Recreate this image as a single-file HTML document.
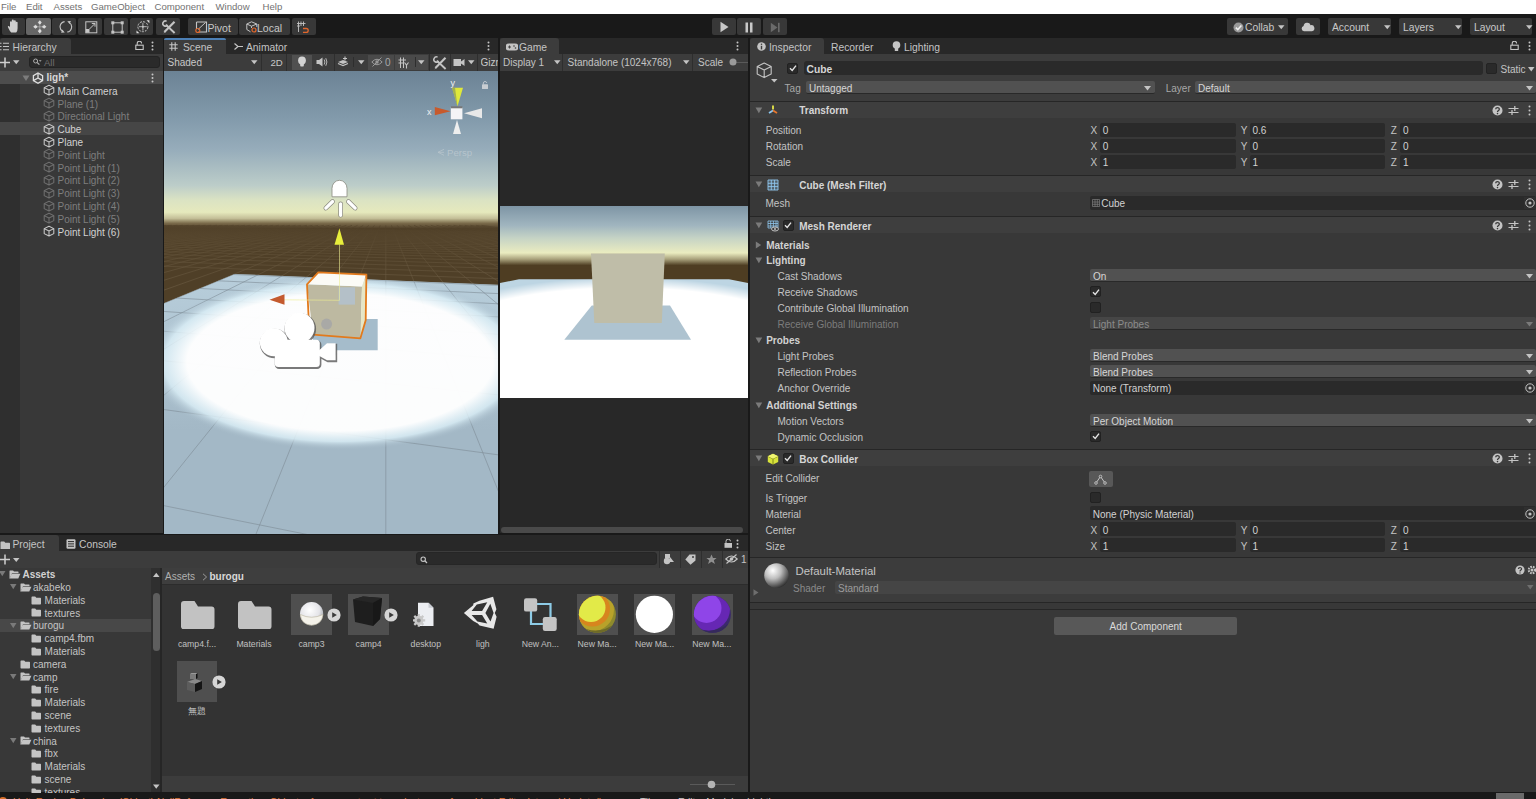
<!DOCTYPE html><html><head><meta charset="utf-8"><style>
*{margin:0;padding:0;box-sizing:border-box}
html,body{width:1536px;height:799px;overflow:hidden}
body{background:#191919;font-family:"Liberation Sans",sans-serif;font-size:10px;color:#c4c4c4;position:relative}
.a{position:absolute}
.t{white-space:nowrap}
svg{position:absolute;overflow:hidden}
</style></head><body>
<div class="a" style="left:0px;top:0px;width:1536px;height:14px;background:#ffffff;"></div>
<div class="a t" style="left:1px;top:1.0px;line-height:12px;font-size:9.6px;color:#727272;">File</div>
<div class="a t" style="left:26px;top:1.0px;line-height:12px;font-size:9.6px;color:#727272;">Edit</div>
<div class="a t" style="left:53.5px;top:1.0px;line-height:12px;font-size:9.6px;color:#727272;">Assets</div>
<div class="a t" style="left:91px;top:1.0px;line-height:12px;font-size:9.6px;color:#727272;">GameObject</div>
<div class="a t" style="left:154.5px;top:1.0px;line-height:12px;font-size:9.6px;color:#727272;">Component</div>
<div class="a t" style="left:215.5px;top:1.0px;line-height:12px;font-size:9.6px;color:#727272;">Window</div>
<div class="a t" style="left:262.5px;top:1.0px;line-height:12px;font-size:9.6px;color:#727272;">Help</div>
<div class="a" style="left:0px;top:14px;width:1536px;height:24px;background:#191919;"></div>
<div class="a" style="left:2px;top:18px;width:23px;height:17px;background:#383838;border-radius:2px;"></div>
<div class="a" style="left:26px;top:18px;width:25px;height:17px;background:#666666;border-radius:2px;"></div>
<div class="a" style="left:52px;top:18px;width:24px;height:17px;background:#383838;border-radius:2px;"></div>
<div class="a" style="left:78px;top:18px;width:24px;height:17px;background:#383838;border-radius:2px;"></div>
<div class="a" style="left:104px;top:18px;width:24px;height:17px;background:#383838;border-radius:2px;"></div>
<div class="a" style="left:130px;top:18px;width:23px;height:17px;background:#383838;border-radius:2px;"></div>
<div class="a" style="left:156px;top:18px;width:24px;height:17px;background:#383838;border-radius:2px;"></div>
<div class="a" style="left:188px;top:18px;width:49.5px;height:17px;background:#383838;border-radius:2px;"></div>
<div class="a" style="left:239px;top:18px;width:50.5px;height:17px;background:#383838;border-radius:2px;"></div>
<div class="a" style="left:291.5px;top:18px;width:24.0px;height:17px;background:#383838;border-radius:2px;"></div>
<div class="a t" style="left:207.5px;top:21.5px;line-height:12px;font-size:10.5px;color:#c8c8c8;">Pivot</div>
<div class="a t" style="left:257px;top:21.5px;line-height:12px;font-size:10.5px;color:#c8c8c8;">Local</div>
<div class="a" style="left:711.5px;top:18px;width:24.0px;height:17px;background:#383838;border-radius:2px;"></div>
<div class="a" style="left:736.5px;top:18px;width:24.5px;height:17px;background:#383838;border-radius:2px;"></div>
<div class="a" style="left:762.5px;top:18px;width:24.5px;height:17px;background:#383838;border-radius:2px;"></div>
<div class="a" style="left:1227px;top:18px;width:61px;height:17px;background:#383838;border-radius:2px;"></div>
<div class="a" style="left:1296px;top:18px;width:24px;height:17px;background:#383838;border-radius:2px;"></div>
<div class="a" style="left:1328px;top:18px;width:63px;height:17px;background:#383838;border-radius:2px;"></div>
<div class="a" style="left:1399px;top:18px;width:62.5px;height:17px;background:#383838;border-radius:2px;"></div>
<div class="a" style="left:1469.5px;top:18px;width:62.5px;height:17px;background:#383838;border-radius:2px;"></div>
<div class="a t" style="left:1245px;top:21.5px;line-height:12px;font-size:10.3px;color:#c8c8c8;">Collab</div>
<div class="a t" style="left:1332px;top:21.5px;line-height:12px;font-size:10.3px;color:#c8c8c8;">Account</div>
<div class="a t" style="left:1403px;top:21.5px;line-height:12px;font-size:10.3px;color:#c8c8c8;">Layers</div>
<div class="a t" style="left:1474px;top:21.5px;line-height:12px;font-size:10.3px;color:#c8c8c8;">Layout</div>
<div class="a" style="left:0px;top:38px;width:1536px;height:16px;background:#282828;"></div>
<div class="a" style="left:0px;top:38px;width:71px;height:16px;background:#3c3c3c;border-radius:3px 3px 0 0;"></div>
<div class="a t" style="left:12.5px;top:41.5px;line-height:12px;font-size:10.3px;color:#c4c4c4;">Hierarchy</div>
<div class="a" style="left:0px;top:54px;width:162.5px;height:16.5px;background:#3c3c3c;"></div>
<div class="a" style="left:29px;top:56px;width:131px;height:11.5px;background:#2a2a2a;border-radius:3px;border:1px solid #232323;"></div>
<div class="a t" style="left:44px;top:57.0px;line-height:12px;font-size:9.5px;color:#6f6f6f;">All</div>
<div class="a" style="left:0px;top:70.5px;width:162.5px;height:462.5px;background:#383838;"></div>
<div class="a" style="left:0px;top:83px;width:20px;height:450px;background:#2f2f2f;"></div>
<div class="a" style="left:162.5px;top:38px;width:1.5px;height:495px;background:#191919;"></div>
<div class="a" style="left:164px;top:38px;width:62px;height:16px;background:#3c3c3c;border-radius:3px 3px 0 0;"></div>
<div class="a" style="left:164px;top:38.3px;width:62px;height:2.2px;background:#4c7fb5;border-radius:2px 2px 0 0;"></div>
<div class="a t" style="left:183px;top:41.5px;line-height:12px;font-size:10.3px;color:#c4c4c4;">Scene</div>
<div class="a t" style="left:246px;top:41.5px;line-height:12px;font-size:10.3px;color:#c4c4c4;">Animator</div>
<div class="a" style="left:164px;top:54px;width:334px;height:16.7px;background:#3c3c3c;"></div>
<div class="a" style="left:498px;top:38px;width:2px;height:495px;background:#191919;"></div>
<div class="a" style="left:500px;top:38px;width:58.5px;height:16px;background:#3c3c3c;border-radius:3px 3px 0 0;"></div>
<div class="a t" style="left:519px;top:41.5px;line-height:12px;font-size:10.3px;color:#c4c4c4;">Game</div>
<div class="a" style="left:500px;top:54px;width:248px;height:16.7px;background:#3c3c3c;"></div>
<div class="a" style="left:500px;top:70.7px;width:248px;height:462.3px;background:#282828;"></div>
<div class="a" style="left:501px;top:527px;width:241.8px;height:5.8px;background:#4a4a4a;border-radius:3px;"></div>
<div class="a t" style="left:503px;top:57.0px;line-height:12px;font-size:10px;color:#c4c4c4;">Display 1</div>
<div class="a t" style="left:567.5px;top:57.0px;line-height:12px;font-size:10px;color:#c4c4c4;">Standalone (1024x768)</div>
<div class="a t" style="left:698px;top:57.0px;line-height:12px;font-size:10px;color:#c4c4c4;">Scale</div>
<div class="a" style="left:748px;top:38px;width:2px;height:754px;background:#191919;"></div>
<div class="a" style="left:750px;top:38px;width:74px;height:16px;background:#3c3c3c;border-radius:3px 3px 0 0;"></div>
<div class="a t" style="left:769px;top:41.5px;line-height:12px;font-size:10.3px;color:#c4c4c4;">Inspector</div>
<div class="a t" style="left:831px;top:41.5px;line-height:12px;font-size:10.3px;color:#c4c4c4;">Recorder</div>
<div class="a t" style="left:904px;top:41.5px;line-height:12px;font-size:10.3px;color:#c4c4c4;">Lighting</div>
<div class="a" style="left:750px;top:54px;width:786px;height:738px;background:#383838;"></div>
<div class="a" style="left:0px;top:533.7px;width:748px;height:1.5px;background:#191919;"></div>
<div class="a" style="left:0px;top:535px;width:748px;height:16px;background:#282828;"></div>
<div class="a" style="left:0px;top:535px;width:59px;height:16px;background:#3c3c3c;border-radius:0 3px 0 0;"></div>
<div class="a t" style="left:12.5px;top:538.5px;line-height:12px;font-size:10.3px;color:#c4c4c4;">Project</div>
<div class="a t" style="left:79px;top:538.5px;line-height:12px;font-size:10.3px;color:#c4c4c4;">Console</div>
<div class="a" style="left:0px;top:551px;width:748px;height:17px;background:#3c3c3c;"></div>
<div class="a" style="left:0px;top:568px;width:161px;height:224px;background:#383838;"></div>
<div class="a" style="left:161px;top:568px;width:587px;height:224px;background:#333333;"></div>
<div class="a" style="left:161px;top:568px;width:587px;height:16px;background:#3e3e3e;"></div>
<div class="a" style="left:0px;top:71px;width:162.5px;height:12.8px;background:#4d4d4d;"></div>
<svg style="left:22px;top:74.5px" width="8" height="6" viewBox="0 0 8 6"><path d="M0.5,0.5H7.5L4,6Z" fill="#7c7c7c"/></svg>
<svg style="left:31.5px;top:71.5px" width="12" height="12" viewBox="0 0 12 12"><path d="M6,1L10.6,3.6V8.6L6,11.2L1.4,8.6V3.6Z" stroke="#e0e0e0" stroke-width="1.3" fill="none"/><path d="M6,6L6,1.5M6,6L1.8,8.4M6,6L10.2,8.4" stroke="#e0e0e0" stroke-width="1.3"/></svg>
<div class="a t" style="left:46.5px;top:72.4px;line-height:12px;font-size:10px;color:#d8d8d8;font-weight:700;">ligh*</div>
<svg style="left:150.5px;top:72.5px" width="3" height="10" viewBox="0 0 3 10"><circle cx="1.5" cy="1.5" r="1" fill="#c8c8c8"/><circle cx="1.5" cy="5" r="1" fill="#c8c8c8"/><circle cx="1.5" cy="8.5" r="1" fill="#c8c8c8"/></svg>
<svg style="left:42.5px;top:84.39999999999999px" width="12" height="12" viewBox="0 0 12 12"><path d="M6,1.2L10.8,3.6V8.6L6,11L1.2,8.6V3.6Z M1.2,3.6L6,6L10.8,3.6 M6,6V11" stroke="#c8c8c8" stroke-width="1.05" fill="none" stroke-linejoin="round"/></svg>
<div class="a t" style="left:57.5px;top:85.8px;line-height:12px;font-size:10px;color:#d2d2d2;">Main Camera</div>
<svg style="left:42.5px;top:97.19999999999999px" width="12" height="12" viewBox="0 0 12 12"><path d="M6,1.2L10.8,3.6V8.6L6,11L1.2,8.6V3.6Z M1.2,3.6L6,6L10.8,3.6 M6,6V11" stroke="#6f6f6f" stroke-width="1.05" fill="none" stroke-linejoin="round"/></svg>
<div class="a t" style="left:57.5px;top:98.6px;line-height:12px;font-size:10px;color:#7e7e7e;">Plane (1)</div>
<svg style="left:42.5px;top:110.0px" width="12" height="12" viewBox="0 0 12 12"><path d="M6,1.2L10.8,3.6V8.6L6,11L1.2,8.6V3.6Z M1.2,3.6L6,6L10.8,3.6 M6,6V11" stroke="#6f6f6f" stroke-width="1.05" fill="none" stroke-linejoin="round"/></svg>
<div class="a t" style="left:57.5px;top:111.4px;line-height:12px;font-size:10px;color:#7e7e7e;">Directional Light</div>
<div class="a" style="left:0px;top:122.2px;width:162.5px;height:12.8px;background:#464646;"></div>
<svg style="left:42.5px;top:122.8px" width="12" height="12" viewBox="0 0 12 12"><path d="M6,1.2L10.8,3.6V8.6L6,11L1.2,8.6V3.6Z M1.2,3.6L6,6L10.8,3.6 M6,6V11" stroke="#c8c8c8" stroke-width="1.05" fill="none" stroke-linejoin="round"/></svg>
<div class="a t" style="left:57.5px;top:124.19999999999999px;line-height:12px;font-size:10px;color:#d2d2d2;">Cube</div>
<svg style="left:42.5px;top:135.6px" width="12" height="12" viewBox="0 0 12 12"><path d="M6,1.2L10.8,3.6V8.6L6,11L1.2,8.6V3.6Z M1.2,3.6L6,6L10.8,3.6 M6,6V11" stroke="#c8c8c8" stroke-width="1.05" fill="none" stroke-linejoin="round"/></svg>
<div class="a t" style="left:57.5px;top:137.0px;line-height:12px;font-size:10px;color:#d2d2d2;">Plane</div>
<svg style="left:42.5px;top:148.4px" width="12" height="12" viewBox="0 0 12 12"><path d="M6,1.2L10.8,3.6V8.6L6,11L1.2,8.6V3.6Z M1.2,3.6L6,6L10.8,3.6 M6,6V11" stroke="#6f6f6f" stroke-width="1.05" fill="none" stroke-linejoin="round"/></svg>
<div class="a t" style="left:57.5px;top:149.8px;line-height:12px;font-size:10px;color:#7e7e7e;">Point Light</div>
<svg style="left:42.5px;top:161.20000000000002px" width="12" height="12" viewBox="0 0 12 12"><path d="M6,1.2L10.8,3.6V8.6L6,11L1.2,8.6V3.6Z M1.2,3.6L6,6L10.8,3.6 M6,6V11" stroke="#6f6f6f" stroke-width="1.05" fill="none" stroke-linejoin="round"/></svg>
<div class="a t" style="left:57.5px;top:162.60000000000002px;line-height:12px;font-size:10px;color:#7e7e7e;">Point Light (1)</div>
<svg style="left:42.5px;top:174.0px" width="12" height="12" viewBox="0 0 12 12"><path d="M6,1.2L10.8,3.6V8.6L6,11L1.2,8.6V3.6Z M1.2,3.6L6,6L10.8,3.6 M6,6V11" stroke="#6f6f6f" stroke-width="1.05" fill="none" stroke-linejoin="round"/></svg>
<div class="a t" style="left:57.5px;top:175.4px;line-height:12px;font-size:10px;color:#7e7e7e;">Point Light (2)</div>
<svg style="left:42.5px;top:186.79999999999998px" width="12" height="12" viewBox="0 0 12 12"><path d="M6,1.2L10.8,3.6V8.6L6,11L1.2,8.6V3.6Z M1.2,3.6L6,6L10.8,3.6 M6,6V11" stroke="#6f6f6f" stroke-width="1.05" fill="none" stroke-linejoin="round"/></svg>
<div class="a t" style="left:57.5px;top:188.2px;line-height:12px;font-size:10px;color:#7e7e7e;">Point Light (3)</div>
<svg style="left:42.5px;top:199.6px" width="12" height="12" viewBox="0 0 12 12"><path d="M6,1.2L10.8,3.6V8.6L6,11L1.2,8.6V3.6Z M1.2,3.6L6,6L10.8,3.6 M6,6V11" stroke="#6f6f6f" stroke-width="1.05" fill="none" stroke-linejoin="round"/></svg>
<div class="a t" style="left:57.5px;top:201.0px;line-height:12px;font-size:10px;color:#7e7e7e;">Point Light (4)</div>
<svg style="left:42.5px;top:212.4px" width="12" height="12" viewBox="0 0 12 12"><path d="M6,1.2L10.8,3.6V8.6L6,11L1.2,8.6V3.6Z M1.2,3.6L6,6L10.8,3.6 M6,6V11" stroke="#6f6f6f" stroke-width="1.05" fill="none" stroke-linejoin="round"/></svg>
<div class="a t" style="left:57.5px;top:213.8px;line-height:12px;font-size:10px;color:#7e7e7e;">Point Light (5)</div>
<svg style="left:42.5px;top:225.20000000000002px" width="12" height="12" viewBox="0 0 12 12"><path d="M6,1.2L10.8,3.6V8.6L6,11L1.2,8.6V3.6Z M1.2,3.6L6,6L10.8,3.6 M6,6V11" stroke="#c8c8c8" stroke-width="1.05" fill="none" stroke-linejoin="round"/></svg>
<div class="a t" style="left:57.5px;top:226.60000000000002px;line-height:12px;font-size:10px;color:#d2d2d2;">Point Light (6)</div>
<div class="a" style="left:750px;top:54px;width:786px;height:47px;background:#3c3c3c;"></div>
<svg style="left:755.5px;top:62px" width="18" height="18" viewBox="0 0 18 18"><path d="M8.2,1L15.2,4.4V12L8.2,15.6L1.2,12V4.4Z M1.2,4.4L8.2,7.9L15.2,4.4 M8.2,7.9V15.6" stroke="#c4c4c4" stroke-width="1.1" fill="none" stroke-linejoin="round"/></svg>
<svg style="left:771px;top:78.8px" width="7" height="4" viewBox="0 0 7 4"><path d="M0,0H6.5L3.25,3.6Z" fill="#c4c4c4"/></svg>
<div class="a" style="left:787.4px;top:62.900000000000006px;width:11px;height:11px;background:#2a2a2a;border:1px solid #212121;border-radius:2px;"></div>
<svg style="left:788.9px;top:64.4px" width="8" height="8" viewBox="0 0 8 8"><path d="M1,4.2L3.2,6.4L7,1.6" stroke="#e4e4e4" stroke-width="1.4" fill="none"/></svg>
<div class="a" style="left:803.7px;top:61.3px;width:679.5px;height:14px;background:#2a2a2a;border-radius:3px;"></div>
<div class="a t" style="left:806.5px;top:64.3px;line-height:12px;font-size:10.3px;color:#d6d6d6;font-weight:700;">Cube</div>
<div class="a" style="left:1486px;top:63px;width:11px;height:11px;background:#2a2a2a;border:1px solid #232323;border-radius:2px;"></div>
<div class="a t" style="left:1500.5px;top:64.0px;line-height:12px;font-size:10px;color:#c4c4c4;">Static</div>
<svg style="left:1528px;top:66.8px" width="6.5" height="5" viewBox="0 0 6.5 5"><path d="M0,0H6.5L3.25,4.4Z" fill="#c4c4c4"/></svg>
<div class="a t" style="left:784.6px;top:83.2px;line-height:12px;font-size:10px;color:#a8a8a8;">Tag</div>
<div class="a" style="left:806px;top:81.0px;width:348.5px;height:13.3px;background:#515151;border-radius:2px;border-bottom:1px solid #292929;"></div>
<div class="a t" style="left:809px;top:82.8px;line-height:12px;font-size:10px;color:#d6d6d6;">Untagged</div>
<svg style="left:1144.0px;top:85.6px" width="7" height="5" viewBox="0 0 7 5"><path d="M0,0H7L3.5,4.4Z" fill="#c4c4c4"/></svg>
<div class="a t" style="left:1165.75px;top:83.2px;line-height:12px;font-size:10px;color:#a8a8a8;">Layer</div>
<div class="a" style="left:1195px;top:81.0px;width:341px;height:13.3px;background:#515151;border-radius:2px;border-bottom:1px solid #292929;"></div>
<div class="a t" style="left:1198px;top:82.8px;line-height:12px;font-size:10px;color:#d6d6d6;">Default</div>
<svg style="left:1525.5px;top:85.6px" width="7" height="5" viewBox="0 0 7 5"><path d="M0,0H7L3.5,4.4Z" fill="#c4c4c4"/></svg>
<div class="a" style="left:750px;top:100.5px;width:786px;height:1px;background:#262626;"></div>
<div class="a" style="left:750px;top:101.5px;width:786px;height:16.2px;background:#3e3e3e;"></div>
<svg style="left:754.8px;top:106.7px" width="8" height="7" viewBox="0 0 8 7"><path d="M0.5,0.5H7.2L3.85,6.2Z" fill="#7b7b7b"/></svg>
<svg style="left:767px;top:104.2px" width="12" height="12" viewBox="0 0 12 12"><path d="M6,5.5V1.5" stroke="#e8e84a" stroke-width="1.8"/><path d="M6,6.5L2,9" stroke="#8cc8f0" stroke-width="1.8"/><path d="M6,6.5L10,9" stroke="#e8782e" stroke-width="1.8"/></svg>
<div class="a t" style="left:799.2px;top:105.3px;line-height:12px;font-size:10px;color:#d6d6d6;font-weight:700;">Transform</div>
<svg style="left:1492px;top:104.7px" width="11" height="11" viewBox="0 0 11 11"><circle cx="5.5" cy="5.5" r="5" fill="#c4c4c4"/><path d="M3.7,4.3C3.7,2.2 7.3,2.2 7.3,4.2C7.3,5.6 5.5,5.5 5.5,7" stroke="#383838" stroke-width="1.3" fill="none"/><circle cx="5.5" cy="8.6" r="0.8" fill="#383838"/></svg>
<svg style="left:1507.5px;top:104.7px" width="11" height="11" viewBox="0 0 11 11"><path d="M0.5,3.5H10.5M0.5,7.5H10.5" stroke="#c4c4c4" stroke-width="1.1"/><path d="M6.8,1V6M4,5V10" stroke="#c4c4c4" stroke-width="1.3"/></svg>
<svg style="left:1527.5px;top:104.7px" width="3" height="11" viewBox="0 0 3 11"><circle cx="1.5" cy="1.5" r="1" fill="#c4c4c4"/><circle cx="1.5" cy="5.5" r="1" fill="#c4c4c4"/><circle cx="1.5" cy="9.5" r="1" fill="#c4c4c4"/></svg>
<div class="a t" style="left:765.8px;top:125.19999999999999px;line-height:12px;font-size:10px;color:#c4c4c4;">Position</div>
<div class="a t" style="left:1090.5px;top:125.19999999999999px;line-height:12px;font-size:10px;color:#c4c4c4;">X</div>
<div class="a" style="left:1099.75px;top:122.99999999999999px;width:136.0px;height:14px;background:#2a2a2a;border-radius:2px;"></div>
<div class="a t" style="left:1102.75px;top:125.19999999999999px;line-height:12px;font-size:10px;color:#d2d2d2;">0</div>
<div class="a t" style="left:1240.75px;top:125.19999999999999px;line-height:12px;font-size:10px;color:#c4c4c4;">Y</div>
<div class="a" style="left:1249.5px;top:122.99999999999999px;width:135.75px;height:14px;background:#2a2a2a;border-radius:2px;"></div>
<div class="a t" style="left:1252.5px;top:125.19999999999999px;line-height:12px;font-size:10px;color:#d2d2d2;">0.6</div>
<div class="a t" style="left:1390.75px;top:125.19999999999999px;line-height:12px;font-size:10px;color:#c4c4c4;">Z</div>
<div class="a" style="left:1400px;top:122.99999999999999px;width:146px;height:14px;background:#2a2a2a;border-radius:2px;"></div>
<div class="a t" style="left:1403px;top:125.19999999999999px;line-height:12px;font-size:10px;color:#d2d2d2;">0</div>
<div class="a t" style="left:765.8px;top:141.2px;line-height:12px;font-size:10px;color:#c4c4c4;">Rotation</div>
<div class="a t" style="left:1090.5px;top:141.2px;line-height:12px;font-size:10px;color:#c4c4c4;">X</div>
<div class="a" style="left:1099.75px;top:139.0px;width:136.0px;height:14px;background:#2a2a2a;border-radius:2px;"></div>
<div class="a t" style="left:1102.75px;top:141.2px;line-height:12px;font-size:10px;color:#d2d2d2;">0</div>
<div class="a t" style="left:1240.75px;top:141.2px;line-height:12px;font-size:10px;color:#c4c4c4;">Y</div>
<div class="a" style="left:1249.5px;top:139.0px;width:135.75px;height:14px;background:#2a2a2a;border-radius:2px;"></div>
<div class="a t" style="left:1252.5px;top:141.2px;line-height:12px;font-size:10px;color:#d2d2d2;">0</div>
<div class="a t" style="left:1390.75px;top:141.2px;line-height:12px;font-size:10px;color:#c4c4c4;">Z</div>
<div class="a" style="left:1400px;top:139.0px;width:146px;height:14px;background:#2a2a2a;border-radius:2px;"></div>
<div class="a t" style="left:1403px;top:141.2px;line-height:12px;font-size:10px;color:#d2d2d2;">0</div>
<div class="a t" style="left:765.8px;top:157.2px;line-height:12px;font-size:10px;color:#c4c4c4;">Scale</div>
<div class="a t" style="left:1090.5px;top:157.2px;line-height:12px;font-size:10px;color:#c4c4c4;">X</div>
<div class="a" style="left:1099.75px;top:155.0px;width:136.0px;height:14px;background:#2a2a2a;border-radius:2px;"></div>
<div class="a t" style="left:1102.75px;top:157.2px;line-height:12px;font-size:10px;color:#d2d2d2;">1</div>
<div class="a t" style="left:1240.75px;top:157.2px;line-height:12px;font-size:10px;color:#c4c4c4;">Y</div>
<div class="a" style="left:1249.5px;top:155.0px;width:135.75px;height:14px;background:#2a2a2a;border-radius:2px;"></div>
<div class="a t" style="left:1252.5px;top:157.2px;line-height:12px;font-size:10px;color:#d2d2d2;">1</div>
<div class="a t" style="left:1390.75px;top:157.2px;line-height:12px;font-size:10px;color:#c4c4c4;">Z</div>
<div class="a" style="left:1400px;top:155.0px;width:146px;height:14px;background:#2a2a2a;border-radius:2px;"></div>
<div class="a t" style="left:1403px;top:157.2px;line-height:12px;font-size:10px;color:#d2d2d2;">1</div>
<div class="a" style="left:750px;top:175px;width:786px;height:1px;background:#262626;"></div>
<div class="a" style="left:750px;top:176px;width:786px;height:16.2px;background:#3e3e3e;"></div>
<svg style="left:754.8px;top:181.2px" width="8" height="7" viewBox="0 0 8 7"><path d="M0.5,0.5H7.2L3.85,6.2Z" fill="#7b7b7b"/></svg>
<svg style="left:767px;top:178.7px" width="12" height="12" viewBox="0 0 12 12"><rect x="1" y="1" width="10" height="10" fill="#90c8f0" opacity=".25"/><path d="M1,1H11V11H1Z M1,4.3H11 M1,7.6H11 M4.3,1V11 M7.6,1V11" stroke="#8fc6ee" stroke-width="0.9" fill="none"/></svg>
<div class="a t" style="left:799.2px;top:179.79999999999998px;line-height:12px;font-size:10px;color:#d6d6d6;font-weight:700;">Cube (Mesh Filter)</div>
<svg style="left:1492px;top:179.2px" width="11" height="11" viewBox="0 0 11 11"><circle cx="5.5" cy="5.5" r="5" fill="#c4c4c4"/><path d="M3.7,4.3C3.7,2.2 7.3,2.2 7.3,4.2C7.3,5.6 5.5,5.5 5.5,7" stroke="#383838" stroke-width="1.3" fill="none"/><circle cx="5.5" cy="8.6" r="0.8" fill="#383838"/></svg>
<svg style="left:1507.5px;top:179.2px" width="11" height="11" viewBox="0 0 11 11"><path d="M0.5,3.5H10.5M0.5,7.5H10.5" stroke="#c4c4c4" stroke-width="1.1"/><path d="M6.8,1V6M4,5V10" stroke="#c4c4c4" stroke-width="1.3"/></svg>
<svg style="left:1527.5px;top:179.2px" width="3" height="11" viewBox="0 0 3 11"><circle cx="1.5" cy="1.5" r="1" fill="#c4c4c4"/><circle cx="1.5" cy="5.5" r="1" fill="#c4c4c4"/><circle cx="1.5" cy="9.5" r="1" fill="#c4c4c4"/></svg>
<div class="a t" style="left:765.5px;top:198.2px;line-height:12px;font-size:10px;color:#c4c4c4;">Mesh</div>
<div class="a" style="left:1089.75px;top:195.8px;width:446.25px;height:14px;background:#2a2a2a;border-radius:2px;"></div>
<svg style="left:1092.25px;top:199px" width="8" height="8" viewBox="0 0 8 8"><path d="M0.5,0.5H7.5V7.5H0.5Z M0.5,3H7.5 M0.5,5.3H7.5 M3,0.5V7.5 M5.3,0.5V7.5" stroke="#8a8a8a" stroke-width="0.6" fill="none"/></svg>
<div class="a t" style="left:1101.25px;top:198.0px;line-height:12px;font-size:10px;color:#d2d2d2;">Cube</div>
<div class="a" style="left:1524px;top:196.8px;width:12px;height:12px;background:#2f2f2f;"></div>
<svg style="left:1524px;top:197px" width="12" height="12" viewBox="0 0 12 12"><circle cx="6" cy="6" r="4.2" stroke="#c4c4c4" stroke-width="1" fill="none"/><circle cx="6" cy="6" r="1.6" fill="#c4c4c4"/></svg>
<div class="a" style="left:750px;top:216px;width:786px;height:1px;background:#262626;"></div>
<div class="a" style="left:750px;top:217px;width:786px;height:16.2px;background:#3e3e3e;"></div>
<svg style="left:754.8px;top:222.2px" width="8" height="7" viewBox="0 0 8 7"><path d="M0.5,0.5H7.2L3.85,6.2Z" fill="#7b7b7b"/></svg>
<svg style="left:767px;top:219.7px" width="12" height="12" viewBox="0 0 12 12"><path d="M1,1H11V8H1Z M1,3.5H11 M1,6H11 M3.7,1V8 M6.4,1V8 M9,1V8" stroke="#8fc6ee" stroke-width="0.8" fill="none"/><ellipse cx="8" cy="9" rx="3.5" ry="2" fill="#383838" stroke="#d0d0d0" stroke-width="0.9"/><circle cx="8" cy="9" r="0.9" fill="#d0d0d0"/></svg>
<div class="a" style="left:782.8px;top:219.7px;width:11px;height:11px;background:#2a2a2a;border:1px solid #212121;border-radius:2px;"></div>
<svg style="left:784.3px;top:221.2px" width="8" height="8" viewBox="0 0 8 8"><path d="M1,4.2L3.2,6.4L7,1.6" stroke="#e4e4e4" stroke-width="1.4" fill="none"/></svg>
<div class="a t" style="left:799.2px;top:220.79999999999998px;line-height:12px;font-size:10px;color:#d6d6d6;font-weight:700;">Mesh Renderer</div>
<svg style="left:1492px;top:220.2px" width="11" height="11" viewBox="0 0 11 11"><circle cx="5.5" cy="5.5" r="5" fill="#c4c4c4"/><path d="M3.7,4.3C3.7,2.2 7.3,2.2 7.3,4.2C7.3,5.6 5.5,5.5 5.5,7" stroke="#383838" stroke-width="1.3" fill="none"/><circle cx="5.5" cy="8.6" r="0.8" fill="#383838"/></svg>
<svg style="left:1507.5px;top:220.2px" width="11" height="11" viewBox="0 0 11 11"><path d="M0.5,3.5H10.5M0.5,7.5H10.5" stroke="#c4c4c4" stroke-width="1.1"/><path d="M6.8,1V6M4,5V10" stroke="#c4c4c4" stroke-width="1.3"/></svg>
<svg style="left:1527.5px;top:220.2px" width="3" height="11" viewBox="0 0 3 11"><circle cx="1.5" cy="1.5" r="1" fill="#c4c4c4"/><circle cx="1.5" cy="5.5" r="1" fill="#c4c4c4"/><circle cx="1.5" cy="9.5" r="1" fill="#c4c4c4"/></svg>
<svg style="left:755px;top:240.7px" width="7" height="8" viewBox="0 0 7 8"><path d="M0.8,0.4V7.4L6.2,3.9Z" fill="#7b7b7b"/></svg>
<div class="a t" style="left:766.2px;top:239.5px;line-height:12px;font-size:10px;color:#d2d2d2;font-weight:700;">Materials</div>
<svg style="left:755px;top:257.2px" width="8" height="7" viewBox="0 0 8 7"><path d="M0.5,0.5H7.2L3.85,6.2Z" fill="#7b7b7b"/></svg>
<div class="a t" style="left:766.2px;top:255.2px;line-height:12px;font-size:10px;color:#d2d2d2;font-weight:700;">Lighting</div>
<div class="a t" style="left:777.5px;top:271.2px;line-height:12px;font-size:10px;color:#c4c4c4;">Cast Shadows</div>
<div class="a" style="left:1090px;top:269.09999999999997px;width:446px;height:13.3px;background:#515151;border-radius:2px;border-bottom:1px solid #292929;"></div>
<div class="a t" style="left:1093px;top:270.9px;line-height:12px;font-size:10px;color:#d6d6d6;">On</div>
<svg style="left:1525.5px;top:273.7px" width="7" height="5" viewBox="0 0 7 5"><path d="M0,0H7L3.5,4.4Z" fill="#c4c4c4"/></svg>
<div class="a t" style="left:777.5px;top:287.2px;line-height:12px;font-size:10px;color:#c4c4c4;">Receive Shadows</div>
<div class="a" style="left:1090px;top:286.09999999999997px;width:11px;height:11px;background:#2a2a2a;border:1px solid #212121;border-radius:2px;"></div>
<svg style="left:1091.5px;top:287.59999999999997px" width="8" height="8" viewBox="0 0 8 8"><path d="M1,4.2L3.2,6.4L7,1.6" stroke="#e4e4e4" stroke-width="1.4" fill="none"/></svg>
<div class="a t" style="left:777.5px;top:303.2px;line-height:12px;font-size:10px;color:#c4c4c4;">Contribute Global Illumination</div>
<div class="a" style="left:1090px;top:302.09999999999997px;width:11px;height:11px;background:#2a2a2a;border:1px solid #212121;border-radius:2px;"></div>
<div class="a t" style="left:777.5px;top:319.2px;line-height:12px;font-size:10px;color:#7c7c7c;">Receive Global Illumination</div>
<div class="a" style="left:1090px;top:316.9px;width:446px;height:13.3px;background:#464646;border-radius:2px;border-bottom:1px solid #292929;"></div>
<div class="a t" style="left:1093px;top:318.7px;line-height:12px;font-size:10px;color:#8c8c8c;">Light Probes</div>
<svg style="left:1525.5px;top:321.5px" width="7" height="5" viewBox="0 0 7 5"><path d="M0,0H7L3.5,4.4Z" fill="#7a7a7a"/></svg>
<svg style="left:755px;top:337.2px" width="8" height="7" viewBox="0 0 8 7"><path d="M0.5,0.5H7.2L3.85,6.2Z" fill="#7b7b7b"/></svg>
<div class="a t" style="left:766.2px;top:335.2px;line-height:12px;font-size:10px;color:#d2d2d2;font-weight:700;">Probes</div>
<div class="a t" style="left:777.5px;top:351.2px;line-height:12px;font-size:10px;color:#c4c4c4;">Light Probes</div>
<div class="a" style="left:1090px;top:349.09999999999997px;width:446px;height:13.3px;background:#515151;border-radius:2px;border-bottom:1px solid #292929;"></div>
<div class="a t" style="left:1093px;top:350.9px;line-height:12px;font-size:10px;color:#d6d6d6;">Blend Probes</div>
<svg style="left:1525.5px;top:353.7px" width="7" height="5" viewBox="0 0 7 5"><path d="M0,0H7L3.5,4.4Z" fill="#c4c4c4"/></svg>
<div class="a t" style="left:777.5px;top:367.2px;line-height:12px;font-size:10px;color:#c4c4c4;">Reflection Probes</div>
<div class="a" style="left:1090px;top:365.09999999999997px;width:446px;height:13.3px;background:#515151;border-radius:2px;border-bottom:1px solid #292929;"></div>
<div class="a t" style="left:1093px;top:366.9px;line-height:12px;font-size:10px;color:#d6d6d6;">Blend Probes</div>
<svg style="left:1525.5px;top:369.7px" width="7" height="5" viewBox="0 0 7 5"><path d="M0,0H7L3.5,4.4Z" fill="#c4c4c4"/></svg>
<div class="a t" style="left:777.5px;top:383.2px;line-height:12px;font-size:10px;color:#c4c4c4;">Anchor Override</div>
<div class="a" style="left:1089.75px;top:381.0px;width:446.25px;height:14px;background:#2a2a2a;border-radius:2px;"></div>
<div class="a t" style="left:1092.75px;top:383.2px;line-height:12px;font-size:10px;color:#d2d2d2;">None (Transform)</div>
<div class="a" style="left:1524px;top:382.0px;width:12px;height:12px;background:#2f2f2f;"></div>
<svg style="left:1524px;top:382.2px" width="12" height="12" viewBox="0 0 12 12"><circle cx="6" cy="6" r="4.2" stroke="#c4c4c4" stroke-width="1" fill="none"/><circle cx="6" cy="6" r="1.6" fill="#c4c4c4"/></svg>
<svg style="left:755px;top:402px" width="8" height="7" viewBox="0 0 8 7"><path d="M0.5,0.5H7.2L3.85,6.2Z" fill="#7b7b7b"/></svg>
<div class="a t" style="left:766.2px;top:400.0px;line-height:12px;font-size:10px;color:#d2d2d2;font-weight:700;">Additional Settings</div>
<div class="a t" style="left:777.5px;top:416.0px;line-height:12px;font-size:10px;color:#c4c4c4;">Motion Vectors</div>
<div class="a" style="left:1090px;top:413.9px;width:446px;height:13.3px;background:#515151;border-radius:2px;border-bottom:1px solid #292929;"></div>
<div class="a t" style="left:1093px;top:415.7px;line-height:12px;font-size:10px;color:#d6d6d6;">Per Object Motion</div>
<svg style="left:1525.5px;top:418.5px" width="7" height="5" viewBox="0 0 7 5"><path d="M0,0H7L3.5,4.4Z" fill="#c4c4c4"/></svg>
<div class="a t" style="left:777.5px;top:432.0px;line-height:12px;font-size:10px;color:#c4c4c4;">Dynamic Occlusion</div>
<div class="a" style="left:1090px;top:430.9px;width:11px;height:11px;background:#2a2a2a;border:1px solid #212121;border-radius:2px;"></div>
<svg style="left:1091.5px;top:432.4px" width="8" height="8" viewBox="0 0 8 8"><path d="M1,4.2L3.2,6.4L7,1.6" stroke="#e4e4e4" stroke-width="1.4" fill="none"/></svg>
<div class="a" style="left:750px;top:449.2px;width:786px;height:1px;background:#262626;"></div>
<div class="a" style="left:750px;top:450.2px;width:786px;height:16.2px;background:#3e3e3e;"></div>
<svg style="left:754.8px;top:455.4px" width="8" height="7" viewBox="0 0 8 7"><path d="M0.5,0.5H7.2L3.85,6.2Z" fill="#7b7b7b"/></svg>
<svg style="left:767px;top:452.9px" width="12" height="12" viewBox="0 0 12 12"><path d="M6,0.8L11.2,3.3V8.9L6,11.4L0.8,8.9V3.3Z" fill="#d8e33a"/><path d="M0.8,3.3L6,5.8L11.2,3.3M6,5.8V11.4" stroke="#6b7010" stroke-width="0.8" fill="none"/><path d="M6,0.8L11.2,3.3L6,5.8L0.8,3.3Z" fill="#f0f570"/></svg>
<div class="a" style="left:782.8px;top:452.9px;width:11px;height:11px;background:#2a2a2a;border:1px solid #212121;border-radius:2px;"></div>
<svg style="left:784.3px;top:454.4px" width="8" height="8" viewBox="0 0 8 8"><path d="M1,4.2L3.2,6.4L7,1.6" stroke="#e4e4e4" stroke-width="1.4" fill="none"/></svg>
<div class="a t" style="left:799.2px;top:454.0px;line-height:12px;font-size:10px;color:#d6d6d6;font-weight:700;">Box Collider</div>
<svg style="left:1492px;top:453.4px" width="11" height="11" viewBox="0 0 11 11"><circle cx="5.5" cy="5.5" r="5" fill="#c4c4c4"/><path d="M3.7,4.3C3.7,2.2 7.3,2.2 7.3,4.2C7.3,5.6 5.5,5.5 5.5,7" stroke="#383838" stroke-width="1.3" fill="none"/><circle cx="5.5" cy="8.6" r="0.8" fill="#383838"/></svg>
<svg style="left:1507.5px;top:453.4px" width="11" height="11" viewBox="0 0 11 11"><path d="M0.5,3.5H10.5M0.5,7.5H10.5" stroke="#c4c4c4" stroke-width="1.1"/><path d="M6.8,1V6M4,5V10" stroke="#c4c4c4" stroke-width="1.3"/></svg>
<svg style="left:1527.5px;top:453.4px" width="3" height="11" viewBox="0 0 3 11"><circle cx="1.5" cy="1.5" r="1" fill="#c4c4c4"/><circle cx="1.5" cy="5.5" r="1" fill="#c4c4c4"/><circle cx="1.5" cy="9.5" r="1" fill="#c4c4c4"/></svg>
<div class="a t" style="left:765.5px;top:473.2px;line-height:12px;font-size:10px;color:#c4c4c4;">Edit Collider</div>
<div class="a" style="left:1088.75px;top:471px;width:23.75px;height:15.75px;background:#585858;border-radius:2px;"></div>
<svg style="left:1094px;top:473.5px" width="14" height="11" viewBox="0 0 14 11"><path d="M2,9L6.5,2.5L11,9" stroke="#d0d0d0" stroke-width="0.9" fill="none"/><circle cx="2" cy="9" r="1.3" fill="#585858" stroke="#d0d0d0" stroke-width=".8"/><circle cx="6.5" cy="2.5" r="1.3" fill="#585858" stroke="#d0d0d0" stroke-width=".8"/><circle cx="11" cy="9" r="1.3" fill="#585858" stroke="#d0d0d0" stroke-width=".8"/></svg>
<div class="a t" style="left:765.5px;top:492.7px;line-height:12px;font-size:10px;color:#c4c4c4;">Is Trigger</div>
<div class="a" style="left:1090px;top:491.5px;width:11px;height:11px;background:#2a2a2a;border:1px solid #212121;border-radius:2px;"></div>
<div class="a t" style="left:765.5px;top:508.70000000000005px;line-height:12px;font-size:10px;color:#c4c4c4;">Material</div>
<div class="a" style="left:1089.75px;top:506.3px;width:446.25px;height:14px;background:#2a2a2a;border-radius:2px;"></div>
<div class="a t" style="left:1092.75px;top:508.5px;line-height:12px;font-size:10px;color:#d2d2d2;">None (Physic Material)</div>
<div class="a" style="left:1524px;top:507.3px;width:12px;height:12px;background:#2f2f2f;"></div>
<svg style="left:1524px;top:507.5px" width="12" height="12" viewBox="0 0 12 12"><circle cx="6" cy="6" r="4.2" stroke="#c4c4c4" stroke-width="1" fill="none"/><circle cx="6" cy="6" r="1.6" fill="#c4c4c4"/></svg>
<div class="a t" style="left:765.5px;top:524.7px;line-height:12px;font-size:10px;color:#c4c4c4;">Center</div>
<div class="a t" style="left:1090.5px;top:524.5px;line-height:12px;font-size:10px;color:#c4c4c4;">X</div>
<div class="a" style="left:1099.75px;top:522.3px;width:136.0px;height:14px;background:#2a2a2a;border-radius:2px;"></div>
<div class="a t" style="left:1102.75px;top:524.5px;line-height:12px;font-size:10px;color:#d2d2d2;">0</div>
<div class="a t" style="left:1240.75px;top:524.5px;line-height:12px;font-size:10px;color:#c4c4c4;">Y</div>
<div class="a" style="left:1249.5px;top:522.3px;width:135.75px;height:14px;background:#2a2a2a;border-radius:2px;"></div>
<div class="a t" style="left:1252.5px;top:524.5px;line-height:12px;font-size:10px;color:#d2d2d2;">0</div>
<div class="a t" style="left:1390.75px;top:524.5px;line-height:12px;font-size:10px;color:#c4c4c4;">Z</div>
<div class="a" style="left:1400px;top:522.3px;width:146px;height:14px;background:#2a2a2a;border-radius:2px;"></div>
<div class="a t" style="left:1403px;top:524.5px;line-height:12px;font-size:10px;color:#d2d2d2;">0</div>
<div class="a t" style="left:765.5px;top:540.7px;line-height:12px;font-size:10px;color:#c4c4c4;">Size</div>
<div class="a t" style="left:1090.5px;top:540.5px;line-height:12px;font-size:10px;color:#c4c4c4;">X</div>
<div class="a" style="left:1099.75px;top:538.3px;width:136.0px;height:14px;background:#2a2a2a;border-radius:2px;"></div>
<div class="a t" style="left:1102.75px;top:540.5px;line-height:12px;font-size:10px;color:#d2d2d2;">1</div>
<div class="a t" style="left:1240.75px;top:540.5px;line-height:12px;font-size:10px;color:#c4c4c4;">Y</div>
<div class="a" style="left:1249.5px;top:538.3px;width:135.75px;height:14px;background:#2a2a2a;border-radius:2px;"></div>
<div class="a t" style="left:1252.5px;top:540.5px;line-height:12px;font-size:10px;color:#d2d2d2;">1</div>
<div class="a t" style="left:1390.75px;top:540.5px;line-height:12px;font-size:10px;color:#c4c4c4;">Z</div>
<div class="a" style="left:1400px;top:538.3px;width:146px;height:14px;background:#2a2a2a;border-radius:2px;"></div>
<div class="a t" style="left:1403px;top:540.5px;line-height:12px;font-size:10px;color:#d2d2d2;">1</div>
<div class="a" style="left:750px;top:557px;width:786px;height:1px;background:#262626;"></div>
<div class="a" style="left:750px;top:558px;width:786px;height:44px;background:#3c3c3c;"></div>
<svg style="left:763px;top:562px" width="27" height="27" viewBox="0 0 27 27"><defs><radialGradient id="sph" cx="0.35" cy="0.3" r="0.75"><stop offset="0" stop-color="#ffffff"/><stop offset="0.45" stop-color="#bdbdbd"/><stop offset="1" stop-color="#2e2e2e"/></radialGradient></defs><circle cx="13.5" cy="13.5" r="12.3" fill="url(#sph)"/></svg>
<div class="a t" style="left:795.5px;top:564.6px;line-height:12px;font-size:11.4px;color:#c4c4c4;">Default-Material</div>
<div class="a t" style="left:793px;top:583.2px;line-height:12px;font-size:10px;color:#8a8a8a;">Shader</div>
<div class="a" style="left:835px;top:580.5px;width:701px;height:13.5px;background:#454545;border-radius:2px;"></div>
<div class="a t" style="left:838px;top:582.5px;line-height:12px;font-size:10px;color:#9c9c9c;">Standard</div>
<svg style="left:1527px;top:585.3px" width="6.5" height="5" viewBox="0 0 6.5 5"><path d="M0,0H6.5L3.25,4.4Z" fill="#6e6e6e"/></svg>
<svg style="left:753px;top:588.5px" width="6" height="7" viewBox="0 0 6 7"><path d="M0.5,0.3V6.7L5.5,3.5Z" fill="#6e6e6e"/></svg>
<svg style="left:1515px;top:564.5px" width="10" height="10" viewBox="0 0 10 10"><circle cx="5" cy="5" r="4.6" fill="#c4c4c4"/><path d="M3.4,4C3.4,2.1 6.6,2.1 6.6,3.9C6.6,5.1 5,5.1 5,6.4" stroke="#3c3c3c" stroke-width="1.2" fill="none"/><circle cx="5" cy="7.9" r="0.7" fill="#3c3c3c"/></svg>
<svg style="left:1527px;top:564.5px" width="10" height="10" viewBox="0 0 10 10"><circle cx="5" cy="5" r="3.2" stroke="#c4c4c4" stroke-width="2.2" fill="none" stroke-dasharray="1.6 1"/><circle cx="5" cy="5" r="1.5" fill="#c4c4c4"/></svg>
<div class="a" style="left:750px;top:602px;width:786px;height:1px;background:#262626;"></div>
<div class="a" style="left:750px;top:609px;width:786px;height:1px;background:#262626;"></div>
<div class="a" style="left:1054px;top:617px;width:183px;height:17.7px;background:#585858;border-radius:2px;"></div>
<div class="a t" style="left:1109.6px;top:620.8px;line-height:12px;font-size:10px;color:#dadada;">Add Component</div>
<svg style="left:0px;top:541px" width="10" height="8" viewBox="0 0 10 8"><path d="M0.5,1.2Q0.5,0.5 1.2,0.5H4.2L5.3,1.8H9.3Q10,1.8 10,2.5V7.8Q10,8.5 9.3,8.5H1.2Q0.5,8.5 0.5,7.8Z" fill="#c4c4c4"/></svg>
<svg style="left:66px;top:538.5px" width="10" height="10" viewBox="0 0 10 10"><rect x="0.5" y="0.3" width="9" height="9.4" rx="1.2" fill="#c4c4c4"/><path d="M2,2.6H8M2,4.9H8M2,7.2H8" stroke="#282828" stroke-width="1"/></svg>
<svg style="left:724px;top:538.5px" width="9" height="9" viewBox="0 0 9 9"><rect x="0.5" y="4" width="7.5" height="4.8" fill="#c4c4c4"/><path d="M2,4V2.3A2.2,2.2 0 0 1 6.4,2.3" stroke="#c4c4c4" stroke-width="1" fill="none"/></svg>
<svg style="left:736px;top:538.5px" width="3" height="10" viewBox="0 0 3 10"><circle cx="1.5" cy="1.5" r="1" fill="#c4c4c4"/><circle cx="1.5" cy="5" r="1" fill="#c4c4c4"/><circle cx="1.5" cy="8.5" r="1" fill="#c4c4c4"/></svg>
<svg style="left:0px;top:554px" width="11" height="11" viewBox="0 0 11 11"><path d="M0,5.5H10M5,0.5V10.5" stroke="#d0d0d0" stroke-width="1.5"/></svg>
<svg style="left:13px;top:557.5px" width="7" height="5" viewBox="0 0 7 5"><path d="M0,0H6.5L3.25,4Z" fill="#c4c4c4"/></svg>
<div class="a" style="left:416px;top:552px;width:241px;height:13px;background:#2a2a2a;border-radius:3px;border:1px solid #262626;"></div>
<svg style="left:420px;top:555.5px" width="8" height="8" viewBox="0 0 8 8"><circle cx="3.2" cy="3.2" r="2.2" stroke="#c4c4c4" stroke-width="1.1" fill="none"/><path d="M4.8,4.8L7,7" stroke="#c4c4c4" stroke-width="1.3"/></svg>
<div class="a" style="left:658.5px;top:551px;width:1px;height:17px;background:#2e2e2e;"></div>
<div class="a" style="left:679.5px;top:551px;width:1px;height:17px;background:#2e2e2e;"></div>
<div class="a" style="left:700.5px;top:551px;width:1px;height:17px;background:#2e2e2e;"></div>
<div class="a" style="left:721.5px;top:551px;width:1px;height:17px;background:#2e2e2e;"></div>
<svg style="left:663px;top:553px" width="12" height="12" viewBox="0 0 12 12"><circle cx="4" cy="8" r="3.2" fill="#c4c4c4"/><rect x="2" y="1" width="5" height="4" fill="#c4c4c4"/><path d="M7,4L11,9H5Z" fill="#c4c4c4"/></svg>
<svg style="left:685px;top:554px" width="11" height="11" viewBox="0 0 11 11"><path d="M4.5,0.5H10.5V6.5L5.5,10.8L0.3,5.6Z" fill="#c4c4c4"/><circle cx="8" cy="3" r="1" fill="#3c3c3c"/></svg>
<svg style="left:706px;top:554px" width="11" height="11" viewBox="0 0 11 11"><path d="M5.5,0.5L7,4H10.6L7.8,6.3L8.9,10L5.5,7.8L2.1,10L3.2,6.3L0.4,4H4Z" fill="#8f8f8f"/></svg>
<svg style="left:725px;top:554px" width="14" height="10" viewBox="0 0 14 10"><path d="M0.8,5Q6.5,-1 12.2,5Q6.5,11 0.8,5Z" stroke="#c4c4c4" stroke-width="1.1" fill="none"/><circle cx="6.5" cy="5" r="1.8" fill="#c4c4c4"/><path d="M1.5,9.5L11.5,0.5" stroke="#c4c4c4" stroke-width="1.1"/></svg>
<div class="a t" style="left:741px;top:554.0px;line-height:12px;font-size:10px;color:#c4c4c4;">1</div>
<div class="a" style="left:151px;top:568px;width:10px;height:224px;background:#2f2f2f;"></div>
<div class="a" style="left:152.5px;top:592.5px;width:7px;height:58.5px;background:#5e5e5e;border-radius:3.5px;"></div>
<svg style="left:153px;top:571.5px" width="7" height="6" viewBox="0 0 7 6"><path d="M0,5H6.5L3.25,0.8Z" fill="#c4c4c4"/></svg>
<svg style="left:153px;top:784px" width="7" height="6" viewBox="0 0 7 6"><path d="M0,0.5H6.5L3.25,4.7Z" fill="#c4c4c4"/></svg>
<div class="a" style="left:160px;top:568px;width:2px;height:224px;background:#262626;"></div>
<svg style="left:-1px;top:571.4000000000001px" width="7" height="6" viewBox="0 0 7 6"><path d="M0,0H6.5L3.25,5.2Z" fill="#7a7a7a"/></svg>
<svg style="left:8.5px;top:570.0px" width="12" height="9" viewBox="0 0 12 9"><path d="M0.5,1Q0.5,0.5 1,0.5H4L5,1.6H9Q9.5,1.6 9.5,2.1V3.2H3L0.9,8.5H0.5Z" fill="#c4c4c4"/><path d="M2.6,3.8H11.4L9.3,8.5H0.7Z" fill="#c4c4c4"/></svg>
<div class="a t" style="left:22.5px;top:569.2px;line-height:12px;font-size:10px;color:#d2d2d2;font-weight:700;">Assets</div>
<svg style="left:10px;top:584.2px" width="7" height="6" viewBox="0 0 7 6"><path d="M0,0H6.5L3.25,5.2Z" fill="#7a7a7a"/></svg>
<svg style="left:19.8px;top:582.8px" width="12" height="9" viewBox="0 0 12 9"><path d="M0.5,1Q0.5,0.5 1,0.5H4L5,1.6H9Q9.5,1.6 9.5,2.1V3.2H3L0.9,8.5H0.5Z" fill="#c4c4c4"/><path d="M2.6,3.8H11.4L9.3,8.5H0.7Z" fill="#c4c4c4"/></svg>
<div class="a t" style="left:33.0px;top:582.0px;line-height:12px;font-size:10px;color:#c4c4c4;">akabeko</div>
<svg style="left:31px;top:595.5000000000001px" width="11" height="9" viewBox="0 0 11 9"><path d="M0.5,1.2Q0.5,0.5 1.2,0.5H4.2L5.3,1.8H9.3Q10,1.8 10,2.5V7.8Q10,8.5 9.3,8.5H1.2Q0.5,8.5 0.5,7.8Z" fill="#c4c4c4"/></svg>
<div class="a t" style="left:44.6px;top:594.8000000000001px;line-height:12px;font-size:10px;color:#c4c4c4;">Materials</div>
<svg style="left:31px;top:608.3000000000001px" width="11" height="9" viewBox="0 0 11 9"><path d="M0.5,1.2Q0.5,0.5 1.2,0.5H4.2L5.3,1.8H9.3Q10,1.8 10,2.5V7.8Q10,8.5 9.3,8.5H1.2Q0.5,8.5 0.5,7.8Z" fill="#c4c4c4"/></svg>
<div class="a t" style="left:44.6px;top:607.6px;line-height:12px;font-size:10px;color:#c4c4c4;">textures</div>
<div class="a" style="left:0px;top:619.0000000000001px;width:151px;height:12.8px;background:#484848;"></div>
<svg style="left:10px;top:622.6000000000001px" width="7" height="6" viewBox="0 0 7 6"><path d="M0,0H6.5L3.25,5.2Z" fill="#7a7a7a"/></svg>
<svg style="left:19.8px;top:621.2px" width="12" height="9" viewBox="0 0 12 9"><path d="M0.5,1Q0.5,0.5 1,0.5H4L5,1.6H9Q9.5,1.6 9.5,2.1V3.2H3L0.9,8.5H0.5Z" fill="#c4c4c4"/><path d="M2.6,3.8H11.4L9.3,8.5H0.7Z" fill="#c4c4c4"/></svg>
<div class="a t" style="left:33.0px;top:620.4000000000001px;line-height:12px;font-size:10px;color:#c4c4c4;">burogu</div>
<svg style="left:31px;top:633.9000000000001px" width="11" height="9" viewBox="0 0 11 9"><path d="M0.5,1.2Q0.5,0.5 1.2,0.5H4.2L5.3,1.8H9.3Q10,1.8 10,2.5V7.8Q10,8.5 9.3,8.5H1.2Q0.5,8.5 0.5,7.8Z" fill="#c4c4c4"/></svg>
<div class="a t" style="left:44.6px;top:633.2px;line-height:12px;font-size:10px;color:#c4c4c4;">camp4.fbm</div>
<svg style="left:31px;top:646.7px" width="11" height="9" viewBox="0 0 11 9"><path d="M0.5,1.2Q0.5,0.5 1.2,0.5H4.2L5.3,1.8H9.3Q10,1.8 10,2.5V7.8Q10,8.5 9.3,8.5H1.2Q0.5,8.5 0.5,7.8Z" fill="#c4c4c4"/></svg>
<div class="a t" style="left:44.6px;top:646.0px;line-height:12px;font-size:10px;color:#c4c4c4;">Materials</div>
<svg style="left:20px;top:659.5000000000001px" width="11" height="9" viewBox="0 0 11 9"><path d="M0.5,1.2Q0.5,0.5 1.2,0.5H4.2L5.3,1.8H9.3Q10,1.8 10,2.5V7.8Q10,8.5 9.3,8.5H1.2Q0.5,8.5 0.5,7.8Z" fill="#c4c4c4"/></svg>
<div class="a t" style="left:33px;top:658.8000000000001px;line-height:12px;font-size:10px;color:#c4c4c4;">camera</div>
<svg style="left:10px;top:673.8000000000001px" width="7" height="6" viewBox="0 0 7 6"><path d="M0,0H6.5L3.25,5.2Z" fill="#7a7a7a"/></svg>
<svg style="left:19.8px;top:672.4px" width="12" height="9" viewBox="0 0 12 9"><path d="M0.5,1Q0.5,0.5 1,0.5H4L5,1.6H9Q9.5,1.6 9.5,2.1V3.2H3L0.9,8.5H0.5Z" fill="#c4c4c4"/><path d="M2.6,3.8H11.4L9.3,8.5H0.7Z" fill="#c4c4c4"/></svg>
<div class="a t" style="left:33.0px;top:671.6px;line-height:12px;font-size:10px;color:#c4c4c4;">camp</div>
<svg style="left:31px;top:685.1000000000001px" width="11" height="9" viewBox="0 0 11 9"><path d="M0.5,1.2Q0.5,0.5 1.2,0.5H4.2L5.3,1.8H9.3Q10,1.8 10,2.5V7.8Q10,8.5 9.3,8.5H1.2Q0.5,8.5 0.5,7.8Z" fill="#c4c4c4"/></svg>
<div class="a t" style="left:44.6px;top:684.4000000000001px;line-height:12px;font-size:10px;color:#c4c4c4;">fire</div>
<svg style="left:31px;top:697.9000000000001px" width="11" height="9" viewBox="0 0 11 9"><path d="M0.5,1.2Q0.5,0.5 1.2,0.5H4.2L5.3,1.8H9.3Q10,1.8 10,2.5V7.8Q10,8.5 9.3,8.5H1.2Q0.5,8.5 0.5,7.8Z" fill="#c4c4c4"/></svg>
<div class="a t" style="left:44.6px;top:697.2px;line-height:12px;font-size:10px;color:#c4c4c4;">Materials</div>
<svg style="left:31px;top:710.7px" width="11" height="9" viewBox="0 0 11 9"><path d="M0.5,1.2Q0.5,0.5 1.2,0.5H4.2L5.3,1.8H9.3Q10,1.8 10,2.5V7.8Q10,8.5 9.3,8.5H1.2Q0.5,8.5 0.5,7.8Z" fill="#c4c4c4"/></svg>
<div class="a t" style="left:44.6px;top:710.0px;line-height:12px;font-size:10px;color:#c4c4c4;">scene</div>
<svg style="left:31px;top:723.5000000000001px" width="11" height="9" viewBox="0 0 11 9"><path d="M0.5,1.2Q0.5,0.5 1.2,0.5H4.2L5.3,1.8H9.3Q10,1.8 10,2.5V7.8Q10,8.5 9.3,8.5H1.2Q0.5,8.5 0.5,7.8Z" fill="#c4c4c4"/></svg>
<div class="a t" style="left:44.6px;top:722.8000000000001px;line-height:12px;font-size:10px;color:#c4c4c4;">textures</div>
<svg style="left:10px;top:737.8000000000001px" width="7" height="6" viewBox="0 0 7 6"><path d="M0,0H6.5L3.25,5.2Z" fill="#7a7a7a"/></svg>
<svg style="left:19.8px;top:736.4px" width="12" height="9" viewBox="0 0 12 9"><path d="M0.5,1Q0.5,0.5 1,0.5H4L5,1.6H9Q9.5,1.6 9.5,2.1V3.2H3L0.9,8.5H0.5Z" fill="#c4c4c4"/><path d="M2.6,3.8H11.4L9.3,8.5H0.7Z" fill="#c4c4c4"/></svg>
<div class="a t" style="left:33.0px;top:735.6px;line-height:12px;font-size:10px;color:#c4c4c4;">china</div>
<svg style="left:31px;top:749.1000000000001px" width="11" height="9" viewBox="0 0 11 9"><path d="M0.5,1.2Q0.5,0.5 1.2,0.5H4.2L5.3,1.8H9.3Q10,1.8 10,2.5V7.8Q10,8.5 9.3,8.5H1.2Q0.5,8.5 0.5,7.8Z" fill="#c4c4c4"/></svg>
<div class="a t" style="left:44.6px;top:748.4000000000001px;line-height:12px;font-size:10px;color:#c4c4c4;">fbx</div>
<svg style="left:31px;top:761.9000000000001px" width="11" height="9" viewBox="0 0 11 9"><path d="M0.5,1.2Q0.5,0.5 1.2,0.5H4.2L5.3,1.8H9.3Q10,1.8 10,2.5V7.8Q10,8.5 9.3,8.5H1.2Q0.5,8.5 0.5,7.8Z" fill="#c4c4c4"/></svg>
<div class="a t" style="left:44.6px;top:761.2px;line-height:12px;font-size:10px;color:#c4c4c4;">Materials</div>
<svg style="left:31px;top:774.7px" width="11" height="9" viewBox="0 0 11 9"><path d="M0.5,1.2Q0.5,0.5 1.2,0.5H4.2L5.3,1.8H9.3Q10,1.8 10,2.5V7.8Q10,8.5 9.3,8.5H1.2Q0.5,8.5 0.5,7.8Z" fill="#c4c4c4"/></svg>
<div class="a t" style="left:44.6px;top:774.0px;line-height:12px;font-size:10px;color:#c4c4c4;">scene</div>
<svg style="left:31px;top:787.5000000000001px" width="11" height="9" viewBox="0 0 11 9"><path d="M0.5,1.2Q0.5,0.5 1.2,0.5H4.2L5.3,1.8H9.3Q10,1.8 10,2.5V7.8Q10,8.5 9.3,8.5H1.2Q0.5,8.5 0.5,7.8Z" fill="#c4c4c4"/></svg>
<div class="a t" style="left:44.6px;top:786.8000000000001px;line-height:12px;font-size:10px;color:#c4c4c4;">textures</div>
<div class="a" style="left:162px;top:584px;width:586px;height:1px;background:#2c2c2c;"></div>
<div class="a t" style="left:165px;top:571.0px;line-height:12px;font-size:10px;color:#b0b0b0;">Assets</div>
<svg style="left:202px;top:572.5px" width="6" height="8" viewBox="0 0 6 8"><path d="M1,0.8L4.6,4L1,7.2" stroke="#9a9a9a" stroke-width="1" fill="none"/></svg>
<div class="a t" style="left:209.5px;top:571.0px;line-height:12px;font-size:10px;color:#d8d8d8;font-weight:700;">burogu</div>
<div class="a" style="left:162px;top:776px;width:586px;height:16px;background:#3c3c3c;"></div>
<div class="a" style="left:690px;top:783.5px;width:45px;height:1px;background:#5a5a5a;"></div>
<svg style="left:707px;top:779.5px" width="9" height="9" viewBox="0 0 9 9"><circle cx="4.5" cy="4.5" r="3.8" fill="#b4b4b4"/></svg>
<div class="a t" style="left:167px;width:60px;text-align:center;top:638.3px;line-height:12px;font-size:8.7px;color:#c0c0c0">camp4.f...</div>
<div class="a t" style="left:224px;width:60px;text-align:center;top:638.3px;line-height:12px;font-size:8.7px;color:#c0c0c0">Materials</div>
<div class="a t" style="left:281.5px;width:60px;text-align:center;top:638.3px;line-height:12px;font-size:8.7px;color:#c0c0c0">camp3</div>
<div class="a t" style="left:338.6px;width:60px;text-align:center;top:638.3px;line-height:12px;font-size:8.7px;color:#c0c0c0">camp4</div>
<div class="a t" style="left:395.8px;width:60px;text-align:center;top:638.3px;line-height:12px;font-size:8.7px;color:#c0c0c0">desktop</div>
<div class="a t" style="left:452.8px;width:60px;text-align:center;top:638.3px;line-height:12px;font-size:8.7px;color:#c0c0c0">ligh</div>
<div class="a t" style="left:510.29999999999995px;width:60px;text-align:center;top:638.3px;line-height:12px;font-size:8.7px;color:#c0c0c0">New An...</div>
<div class="a t" style="left:567.1px;width:60px;text-align:center;top:638.3px;line-height:12px;font-size:8.7px;color:#c0c0c0">New Ma...</div>
<div class="a t" style="left:624.5px;width:60px;text-align:center;top:638.3px;line-height:12px;font-size:8.7px;color:#c0c0c0">New Ma...</div>
<div class="a t" style="left:681.8px;width:60px;text-align:center;top:638.3px;line-height:12px;font-size:8.7px;color:#c0c0c0">New Ma...</div>
<div class="a t" style="left:167px;width:60px;text-align:center;top:705.0px;line-height:12px;font-size:9px;color:#c4c4c4">無題</div>
<svg style="left:180.5px;top:600.5px" width="34" height="28.5" viewBox="0 0 34 28.5"><path d="M0,3Q0,0 3,0H13.5L17,5.5H30.5Q33.5,5.5 33.5,8.5V25.5Q33.5,28.3 30.5,28.3H3Q0,28.3 0,25.5Z" fill="#c2c2c2"/></svg>
<svg style="left:237.6px;top:600.5px" width="34" height="28.5" viewBox="0 0 34 28.5"><path d="M0,3Q0,0 3,0H13.5L17,5.5H30.5Q33.5,5.5 33.5,8.5V25.5Q33.5,28.3 30.5,28.3H3Q0,28.3 0,25.5Z" fill="#c2c2c2"/></svg>
<div class="a" style="left:291.3px;top:594.3px;width:40.4px;height:40.6px;background:#4f4f4f;"></div>
<svg style="left:296px;top:598px" width="32" height="32" viewBox="0 0 32 32"><defs><radialGradient id="wsph" cx=".42" cy=".35" r=".7"><stop offset="0" stop-color="#ffffff"/><stop offset=".6" stop-color="#e4e4e8"/><stop offset="1" stop-color="#9aa0a8"/></radialGradient></defs><circle cx="15.6" cy="15.7" r="11.6" fill="url(#wsph)"/><path d="M4.3,16.5Q15.6,22 27,16.5Q26,26.5 15.6,27.3Q5.2,26.5 4.3,16.5Z" fill="#f4f2ea" stroke="#b8b29a" stroke-width=".6"/></svg>
<svg style="left:325.6px;top:607px" width="16" height="16" viewBox="0 0 16 16"><circle cx="8" cy="8.6" r="6.6" fill="#222" opacity=".45"/><circle cx="8" cy="8" r="6.6" fill="#d6d6d6"/><path d="M6.2,5.2V10.8L10.9,8Z" fill="#3a3a3a"/></svg>
<div class="a" style="left:348.3px;top:594.3px;width:40.6px;height:40.6px;background:#4f4f4f;"></div>
<svg style="left:349px;top:595px" width="38" height="38" viewBox="0 0 38 38"><path d="M4,4.5L14,1.5L33,3L31,24L24,31L6,27Z" fill="#1e1e1e"/><path d="M4,4.5L14,1.5L33,3L24,8Z" fill="#262626"/><path d="M24,8L33,3L31,24L24,31Z" fill="#181818"/></svg>
<svg style="left:382.5px;top:607px" width="16" height="16" viewBox="0 0 16 16"><circle cx="8" cy="8.6" r="6.6" fill="#222" opacity=".45"/><circle cx="8" cy="8" r="6.6" fill="#d6d6d6"/><path d="M6.2,5.2V10.8L10.9,8Z" fill="#3a3a3a"/></svg>
<svg style="left:413px;top:601px" width="24" height="28" viewBox="0 0 24 28"><path d="M5,1.7H15.5L20.5,6.7V25H5Z" fill="#eceef2"/><path d="M15.5,1.7V6.7H20.5" fill="#c9ccd2"/><g transform="translate(5.8,19.4)"><circle r="4.6" fill="#c8c8c8"/><path d="M0,-6.4V6.4M-6.4,0H6.4M-4.5,-4.5L4.5,4.5M-4.5,4.5L4.5,-4.5" stroke="#c8c8c8" stroke-width="2.2"/><circle r="2" fill="#8a8a8a"/></g></svg>
<svg style="left:460px;top:592px" width="42" height="42" viewBox="0 0 42 42"><path d="M3.9,21L13.2,13.2L13.4,11.6L19.4,8.8L33.1,4.7L36.4,17.3L34.8,21L36.6,24.7L33.6,36.8L19.6,33.4L17.8,31.6L13.2,29L3.9,21Z" fill="#e8e8e8"/><path d="M11.6,18.9L16.8,12.6L27.3,10.3L22.1,18.9Z M11.6,23.1L22.1,23.1L27.3,31.5L17.4,29.4Z M25.4,21L30.3,11.8L33.6,21L30.5,29.6Z" fill="#333"/></svg>
<svg style="left:522px;top:596px" width="36" height="37" viewBox="0 0 36 37"><path d="M15,8H28.5V21M9,15V28H21" stroke="#8dcbe6" stroke-width="2.2" fill="none"/><rect x="2" y="2.3" width="13.2" height="13.3" rx="2.2" fill="#c4c4c4"/><rect x="20.8" y="21" width="13.9" height="14" rx="2.2" fill="#c4c4c4"/></svg>
<div class="a" style="left:576.6px;top:593.9px;width:41px;height:40.9px;background:#4f4f4f;"></div>
<div class="a" style="left:634px;top:593.9px;width:41px;height:40.9px;background:#4f4f4f;"></div>
<div class="a" style="left:691.5px;top:593.9px;width:41px;height:40.9px;background:#4f4f4f;"></div>
<svg style="left:578px;top:595px" width="38" height="38" viewBox="0 0 38 38"><defs><clipPath id="c1"><circle cx="19.4" cy="19.3" r="18.5"/></clipPath></defs><g clip-path="url(#c1)"><rect width="38" height="38" fill="#8e8a2c"/><circle cx="14" cy="14.5" r="22" fill="#b8a22a"/><circle cx="14.5" cy="14" r="17.5" fill="#d7851e"/><circle cx="13" cy="12.5" r="14.5" fill="#e2ea48"/><path d="M0,30Q19,42 38,28V38H0Z" fill="#6e6a28"/></g></svg>
<svg style="left:635px;top:595px" width="38" height="38" viewBox="0 0 38 38"><circle cx="19.4" cy="19.3" r="18.6" fill="#ffffff"/></svg>
<svg style="left:692.5px;top:595px" width="38" height="38" viewBox="0 0 38 38"><defs><clipPath id="c2"><circle cx="19.4" cy="19.3" r="18.5"/></clipPath></defs><g clip-path="url(#c2)"><rect width="38" height="38" fill="#3b2a6c"/><circle cx="15" cy="14" r="22" fill="#6627b4"/><circle cx="13.5" cy="13" r="15" fill="#8f45e8"/><path d="M0,31Q19,42 38,27V38H0Z" fill="#352a5c"/></g></svg>
<div class="a" style="left:176.8px;top:661px;width:40.5px;height:40.6px;background:#4f4f4f;"></div>
<svg style="left:185px;top:670px" width="26" height="24" viewBox="0 0 26 24"><path d="M5,4H11V9H5Z" fill="#7a7a7a"/><path d="M11,4V9L12.5,8V3Z" fill="#111"/><path d="M5,4L6.5,3H12.5L11,4Z" fill="#999"/><path d="M2,12L10,9L17,11L10,14Z" fill="#8a8a8a"/><path d="M2,12L10,14V22L2,20Z" fill="#5c5c5c"/><path d="M10,14L17,11V19L10,22Z" fill="#151515"/></svg>
<svg style="left:211.3px;top:673.7px" width="16" height="16" viewBox="0 0 16 16"><circle cx="8" cy="8.6" r="6.6" fill="#222" opacity=".45"/><circle cx="8" cy="8" r="6.6" fill="#d6d6d6"/><path d="M6.2,5.2V10.8L10.9,8Z" fill="#3a3a3a"/></svg>
<svg style="left:164px;top:70.7px" width="334" height="463" viewBox="164 70.7 334 463"><defs>
<linearGradient id="sky" gradientUnits="userSpaceOnUse" x1="0" y1="70.7" x2="0" y2="228">
<stop offset="0" stop-color="#6c8395"/><stop offset="0.3" stop-color="#829aab"/><stop offset="0.504" stop-color="#97adbb"/><stop offset="0.727" stop-color="#bccdc9"/>
<stop offset="0.822" stop-color="#dbe3c3"/><stop offset="0.898" stop-color="#e6e9bd"/><stop offset="0.937" stop-color="#c4bf98"/><stop offset="0.968" stop-color="#7a6a4a"/><stop offset="1" stop-color="#51412a"/></linearGradient>
<radialGradient id="spot"><stop offset="0" stop-color="#fff" stop-opacity="0.97"/><stop offset="0.78" stop-color="#fff" stop-opacity="0.97"/><stop offset="0.9" stop-color="#dcf0f8" stop-opacity="0.8"/><stop offset="1" stop-color="#a3b8c6" stop-opacity="0"/></radialGradient>
<clipPath id="planeclip"><polygon points="164,302.9 234.7,273.6 498,284.4 498,533.7 164,533.7"/></clipPath>
<filter id="blur1" x="-10%" y="-10%" width="120%" height="120%"><feGaussianBlur stdDeviation="0.5"/></filter>
</defs><rect x="164" y="70.7" width="334" height="160" fill="url(#sky)"/><rect x="164" y="228" width="334" height="306" fill="#4f3f27"/><defs><linearGradient id="gfade" gradientUnits="userSpaceOnUse" x1="0" y1="224" x2="0" y2="300"><stop offset="0" stop-color="#4f3f27"/><stop offset="0.3" stop-color="#5f4f36"/><stop offset="1" stop-color="#706048"/></linearGradient></defs><path d="M164.0,265.89L498.0,278.42 M164.0,261.34L498.0,272.83 M164.0,257.49L498.0,268.10 M164.0,254.18L498.0,264.04 M164.0,251.32L498.0,260.52 M164.0,248.81L498.0,257.43 M164.0,246.59L498.0,254.71 M164.0,244.62L498.0,252.29 M164.0,242.86L498.0,250.13 M164.0,241.27L498.0,248.18 M164.0,239.83L498.0,246.41 M164.0,238.53L498.0,244.81 M164.0,237.33L498.0,243.34 M164.0,236.24L498.0,242.00 M164.0,235.23L498.0,240.76 M164.0,234.30L498.0,239.62 M164.0,233.44L498.0,238.56 M164.0,232.64L498.0,237.58 M164.0,231.90L498.0,236.66 M164.0,231.20L498.0,235.81 M164.0,230.55L498.0,235.01 M164.0,229.94L498.0,234.26 M164.0,229.37L498.0,233.56 M164.0,228.83L498.0,232.90 M164.0,228.32L498.0,232.27 M164.0,227.84L498.0,231.68 M164.0,227.39L498.0,231.12 M126.8,225.0L-5700.7,540.0 M132.4,225.0L-5568.4,540.0 M138.1,225.0L-5436.1,540.0 M143.7,225.0L-5303.8,540.0 M149.3,225.0L-5171.4,540.0 M155.0,225.0L-5039.1,540.0 M160.6,225.0L-4906.8,540.0 M166.2,225.0L-4774.5,540.0 M171.8,225.0L-4642.2,540.0 M177.5,225.0L-4509.9,540.0 M183.1,225.0L-4377.5,540.0 M188.7,225.0L-4245.2,540.0 M194.4,225.0L-4112.9,540.0 M200.0,225.0L-3980.6,540.0 M205.6,225.0L-3848.3,540.0 M211.3,225.0L-3716.0,540.0 M216.9,225.0L-3583.7,540.0 M222.5,225.0L-3451.3,540.0 M228.1,225.0L-3319.0,540.0 M233.8,225.0L-3186.7,540.0 M239.4,225.0L-3054.4,540.0 M245.0,225.0L-2922.1,540.0 M250.7,225.0L-2789.8,540.0 M256.3,225.0L-2657.4,540.0 M261.9,225.0L-2525.1,540.0 M267.6,225.0L-2392.8,540.0 M273.2,225.0L-2260.5,540.0 M278.8,225.0L-2128.2,540.0 M284.5,225.0L-1995.9,540.0 M290.1,225.0L-1863.6,540.0 M295.7,225.0L-1731.2,540.0 M301.3,225.0L-1598.9,540.0 M307.0,225.0L-1466.6,540.0 M312.6,225.0L-1334.3,540.0 M318.2,225.0L-1202.0,540.0 M323.9,225.0L-1069.7,540.0 M329.5,225.0L-937.4,540.0 M335.1,225.0L-805.0,540.0 M340.8,225.0L-672.7,540.0 M346.4,225.0L-540.4,540.0 M352.0,225.0L-408.1,540.0 M357.6,225.0L-275.8,540.0 M363.3,225.0L-143.5,540.0 M368.9,225.0L-11.1,540.0 M374.5,225.0L121.2,540.0 M380.2,225.0L253.5,540.0 M385.8,225.0L385.8,540.0 M391.4,225.0L518.1,540.0 M397.1,225.0L650.4,540.0 M402.7,225.0L782.7,540.0 M408.3,225.0L915.1,540.0 M414.0,225.0L1047.4,540.0 M419.6,225.0L1179.7,540.0 M425.2,225.0L1312.0,540.0 M430.8,225.0L1444.3,540.0 M436.5,225.0L1576.6,540.0 M442.1,225.0L1709.0,540.0 M447.7,225.0L1841.3,540.0 M453.4,225.0L1973.6,540.0 M459.0,225.0L2105.9,540.0 M464.6,225.0L2238.2,540.0 M470.3,225.0L2370.5,540.0 M475.9,225.0L2502.8,540.0 M481.5,225.0L2635.2,540.0" stroke="url(#gfade)" stroke-width="0.6" fill="none"/><defs><linearGradient id="plg" gradientUnits="userSpaceOnUse" x1="0" y1="274" x2="0" y2="430"><stop offset="0" stop-color="#b8cedb"/><stop offset="1" stop-color="#a3b8c6"/></linearGradient></defs><polygon points="164,302.9 234.7,273.6 498,284.4 498,533.7 164,533.7" fill="url(#plg)"/><g clip-path="url(#planeclip)"><path d="M164.0,271.35L498.0,285.12 M164.0,278.01L498.0,293.30 M164.0,286.32L498.0,303.50 M164.0,296.98L498.0,316.60 M164.0,311.16L498.0,334.02 M164.0,330.95L498.0,358.31 M164.0,360.47L498.0,394.57 M164.0,409.27L498.0,454.51 M164.0,505.38L498.0,572.54 M243.4,270.0L-408.1,540.0 M267.2,270.0L-275.8,540.0 M290.9,270.0L-143.5,540.0 M314.6,270.0L-11.1,540.0 M338.3,270.0L121.2,540.0 M362.1,270.0L253.5,540.0 M385.8,270.0L385.8,540.0 M409.5,270.0L518.1,540.0 M433.3,270.0L650.4,540.0 M457.0,270.0L782.7,540.0 M480.7,270.0L915.1,540.0 M504.4,270.0L1047.4,540.0 M528.2,270.0L1179.7,540.0 M551.9,270.0L1312.0,540.0" stroke="#7d8c96" stroke-width="0.6" fill="none"/><ellipse cx="340" cy="362" rx="196" ry="88" fill="url(#spot)"/></g><polygon points="358,318.6 377.7,318.6 377.7,350 313,350 313,334" fill="#a5bccb"/><polygon points="307,284 362,286.3 360.4,338 313,334.4" fill="#bdb9a1"/><polygon points="318.3,272 366.4,274.3 362,286.3 307,284" fill="#fbfbf6"/><polygon points="366.4,274.3 362,286.3 360.4,338 365.7,320" fill="#e6e6c6"/><rect x="338.6" y="287" width="16.4" height="17.3" fill="#b4c0c8"/><circle cx="326.6" cy="323.8" r="5.5" fill="#a9a9a6"/><polygon points="318.3,272 366.4,274.3 365.7,320 360.4,338 313,334.4 309.3,330.6 307,284" fill="none" stroke="#e27a1c" stroke-width="1.8" stroke-linejoin="round"/><path d="M339.5,244L339.5,300 M284,299.5L339.5,300" stroke="#eeee90" stroke-width="0.7" opacity="0.85"/><polygon points="339.4,228 334.5,244.5 344,244.5" fill="#e8ee3c"/><polygon points="269.5,299.4 284.5,294 284.5,304.5" fill="#c45a2e"/><path d="M332,196.5L332,188A7.5,8 0 0 1 347,188L347,196.5Z" fill="#fff" stroke="#8a8a80" stroke-width="0.8"/><path d="M340.6,203.5V215 M325.8,207.8L332.6,201.2 M355.2,207.8L348.4,201.2" stroke="#8a8a80" stroke-width="4.6" stroke-linecap="round" fill="none"/><path d="M340.6,203.5V215 M325.8,207.8L332.6,201.2 M355.2,207.8L348.4,201.2" stroke="#fff" stroke-width="3.2" stroke-linecap="round" fill="none"/><g fill="#5a5a5a" stroke="#5a5a5a" stroke-width="1.6" opacity="0.8" filter="url(#blur1)" transform="translate(0.8,1.2)"><circle cx="299.5" cy="327.5" r="15"/><circle cx="273.8" cy="342" r="14"/><rect x="274.8" y="339.5" width="45" height="27.2" rx="3.5"/><polygon points="318,351 327,343 335.6,343 335.6,360 327,360 318,355"/></g><g fill="#fff"><circle cx="299.5" cy="327.5" r="15"/><circle cx="273.8" cy="342" r="14"/><rect x="274.8" y="339.5" width="45" height="27.2" rx="3.5"/><polygon points="318,351 327,343 335.6,343 335.6,360 327,360 318,355"/></g><polygon points="452,87.5 463,87.5 457.5,106" fill="#dfe83a"/><polygon points="452,87.5 455,87.5 457.5,106" fill="#8a9a55" opacity=".7"/><polygon points="434.8,106.6 434.8,115 450.6,111" fill="#c85a2c"/><polygon points="482,108 482,118 464,113" fill="#e8e8e8"/><polygon points="453,133.7 461,133.7 457,119.6" fill="#eeeeee"/><rect x="450.8" y="107.2" width="11.6" height="11.8" fill="#f4f4f6"/><rect x="451" y="106" width="11.4" height="2" fill="#777"/><text x="450.5" y="86" font-size="9" fill="#f0f0f0" font-family="Liberation Sans">y</text><text x="427" y="114.5" font-size="9" fill="#f0f0f0" font-family="Liberation Sans">x</text><rect x="482" y="84" width="6" height="4.8" fill="#c8cdd2" rx="0.6"/><path d="M483.3,84.2V82.6A1.8,1.8 0 0 1 486.8,82.6" stroke="#c8cdd2" stroke-width="0.9" fill="none"/><text x="447" y="155.5" font-size="9.6" fill="#b6c4cc" font-family="Liberation Sans">Persp</text><path d="M444,149L438,152L444,155M438,152H444" stroke="#b6c4cc" stroke-width=".8" fill="none"/></svg>
<div class="a" style="left:0px;top:792.5px;width:1536px;height:6.5px;background:#191919;"></div>
<div class="a" style="left:0;top:792.5px;width:1536px;height:6.5px;overflow:hidden"><div class="a" style="left:-1px;top:4px;width:8px;height:8px;border-radius:50%;background:#d8702a"></div><div class="a t" style="left:13px;top:4.2px;font-size:10px;line-height:12px;color:#e07a3a">UnityEngine.Debug:Log(Object) NullReferenceException: Object reference not set to an instance of an object Editor.Internal.Update()</div><div class="a t" style="left:640px;top:4.2px;font-size:10px;line-height:12px;color:#c8c8c8;width:140px;overflow:hidden">Tilemap.Editor.Modules.Lighting</div><div class="a t" style="left:1395px;top:4.4px;font-size:9px;line-height:12px;color:#c8c8c8;letter-spacing:-0.6px">Auto Generate Lighting Off</div><div class="a" style="left:1496px;top:-2px;width:28.4px;height:12px;background:#6a6a6a"></div><div class="a t" style="left:1503px;top:4.4px;font-size:9px;line-height:12px;color:#d8d8d8">Off</div></div>
<svg style="left:500px;top:205.5px" width="248" height="192.5" viewBox="500 205.5 248 192.5"><defs><linearGradient id="gsky" gradientUnits="userSpaceOnUse" x1="0" y1="205.5" x2="0" y2="268">
<stop offset="0" stop-color="#7e95a5"/><stop offset="0.31" stop-color="#a0b5bf"/><stop offset="0.51" stop-color="#c5d3c5"/><stop offset="0.75" stop-color="#eaecc0"/>
<stop offset="0.85" stop-color="#a9a27c"/><stop offset="0.95" stop-color="#4e3d22"/><stop offset="1" stop-color="#4e3d22"/></linearGradient>
<radialGradient id="gspot"><stop offset="0" stop-color="#fff"/><stop offset="0.88" stop-color="#fff"/><stop offset="1" stop-color="#fff" stop-opacity="0"/></radialGradient></defs><rect x="500" y="205.5" width="248" height="63" fill="url(#gsky)"/><rect x="500" y="268" width="248" height="20" fill="#4e3d22"/><polygon points="500,282.5 519,278.7 729,278.7 748,282.5 748,398 500,398" fill="#bdd5e3"/><ellipse cx="624" cy="363" rx="250" ry="86" fill="url(#gspot)"/><rect x="500" y="340" width="248" height="60" fill="#fff"/><polygon points="591.8,305 670,305 691,339.3 564.3,339.3" fill="#aec3d0"/><polygon points="591,253 664.8,253 661.8,322.5 594.3,322.5" fill="#bfbda8"/></svg>
<svg style="left:7px;top:19px" width="14" height="15" viewBox="0 0 14 15"><path d="M4.2,13.6Q2.6,12 1.6,9.6L0.9,8Q0.6,7 1.6,7Q2.3,7 3,8.3V3.2Q3,2.2 3.9,2.2Q4.8,2.2 4.8,3.2V7V1.6Q4.8,0.6 5.8,0.6Q6.8,0.6 6.8,1.6V7V2.2Q6.8,1.2 7.8,1.2Q8.8,1.2 8.8,2.2V7.4V3.6Q8.8,2.7 9.7,2.7Q10.6,2.7 10.6,3.6V9.2Q10.6,12.2 9.2,13.6Z" fill="#cfcfcf"/></svg>
<svg style="left:32.5px;top:20px" width="14" height="14" viewBox="0 0 14 14"><path d="M6.8,2.5V11M2.5,6.8H11" stroke="#d8d8d8" stroke-width="0.8" opacity=".6"/><path d="M6.8,0.2L4.6,2.8H9Z M6.8,13.4L4.6,10.8H9Z M0.2,6.8L2.8,4.6V9Z M13.4,6.8L10.8,4.6V9Z" fill="#dcdcdc"/><circle cx="6.8" cy="3" r="1.3" fill="#dcdcdc"/><circle cx="6.8" cy="10.6" r="1.3" fill="#dcdcdc"/><circle cx="3" cy="6.8" r="1.3" fill="#dcdcdc"/><circle cx="10.6" cy="6.8" r="1.3" fill="#dcdcdc"/></svg>
<svg style="left:58.5px;top:20px" width="14" height="14" viewBox="0 0 14 14"><path d="M5.6,1.6A5.2,5.2 0 0 0 3.6,11.2M8.2,12A5.2,5.2 0 0 0 10.4,2.6" stroke="#c4c4c4" stroke-width="1.1" fill="none"/><path d="M11.9,0.9L8.3,1.2L10.6,4Z M2.1,12.7L5.7,12.4L3.4,9.6Z" fill="#c4c4c4"/></svg>
<svg style="left:84.5px;top:20.5px" width="13" height="13" viewBox="0 0 13 13"><rect x="0.8" y="0.8" width="11" height="11" stroke="#c4c4c4" stroke-width="1" fill="none"/><rect x="0.8" y="8" width="3.7" height="3.7" fill="#c4c4c4"/><path d="M4.5,8L10,2.5M6.8,2.5H10V5.7" stroke="#c4c4c4" stroke-width="1" fill="none"/></svg>
<svg style="left:110.5px;top:20.5px" width="13" height="13" viewBox="0 0 13 13"><rect x="1.8" y="1.8" width="9.4" height="9.4" stroke="#c4c4c4" stroke-width="1" fill="none"/><rect x="0.3" y="0.3" width="3" height="3" fill="#c4c4c4"/><rect x="9.7" y="0.3" width="3" height="3" fill="#c4c4c4"/><rect x="0.3" y="9.7" width="3" height="3" fill="#c4c4c4"/><rect x="9.7" y="9.7" width="3" height="3" fill="#c4c4c4"/></svg>
<svg style="left:135.5px;top:20px" width="14" height="14" viewBox="0 0 14 14"><circle cx="6.9" cy="6.7" r="5" stroke="#c4c4c4" stroke-width="1" fill="none" stroke-dasharray="2.2 1.1"/><path d="M6.9,2.8V10.6M3,6.7H10.8" stroke="#c4c4c4" stroke-width="0.9"/><circle cx="6.9" cy="6.7" r="1" fill="#c4c4c4"/><path d="M10.5,0.3H13.4V3.2Z M0.5,13.3H3.4L0.5,10.4Z" fill="#dcdcdc"/></svg>
<svg style="left:161.5px;top:19.5px" width="14" height="14" viewBox="0 0 14 14"><path d="M3.8,4.6L12.6,13" stroke="#c4c4c4" stroke-width="2"/><path d="M4.6,1.2A2.6,2.6 0 1 0 5.6,5" stroke="#c4c4c4" stroke-width="1.6" fill="none"/><path d="M12.5,1.8L2.4,12" stroke="#c4c4c4" stroke-width="2.2"/><path d="M2.9,11.4L1.3,13.6L3.5,12.1Z" fill="#c4c4c4"/></svg>
<svg style="left:195px;top:21px" width="13" height="12" viewBox="0 0 13 12"><path d="M1.5,1H11.5V11H3.5" stroke="#c4c4c4" stroke-width="1.1" fill="none"/><path d="M1.5,1V8" stroke="#c4c4c4" stroke-width="1.1"/><path d="M3,8.5L10.5,1.5" stroke="#c4c4c4" stroke-width="1"/><circle cx="2.8" cy="9.5" r="2" stroke="#e2672c" stroke-width="1.2" fill="none"/></svg>
<svg style="left:245.5px;top:21px" width="13" height="12" viewBox="0 0 13 12"><path d="M5.5,0.8L10.8,3V6M5.5,0.8L0.8,3V8.5L4.5,10.8M0.8,3L5.5,5.2L10.8,3M5.5,5.2V7" stroke="#c4c4c4" stroke-width="1" fill="none" stroke-linejoin="round"/><circle cx="8" cy="9" r="2" stroke="#e2672c" stroke-width="1.2" fill="none"/></svg>
<svg style="left:297px;top:21px" width="13" height="12" viewBox="0 0 13 12"><path d="M1.5,0.5V11M4,0.5V5M6.5,0.5V5M0,2.5H8.5M0,5H3" stroke="#c4c4c4" stroke-width="0.9"/><path d="M6,7.5H9.2A2,2 0 0 1 9.2,11.5H6" stroke="#e2672c" stroke-width="1.3" fill="none"/></svg>
<svg style="left:719px;top:21px" width="10" height="12" viewBox="0 0 10 12"><path d="M1.5,0.8V11.2L9.5,6Z" fill="#c8c8c8"/></svg>
<svg style="left:744px;top:21.5px" width="10" height="11" viewBox="0 0 10 11"><rect x="1.5" y="0.5" width="2.5" height="10" fill="#c8c8c8"/><rect x="6" y="0.5" width="2.5" height="10" fill="#c8c8c8"/></svg>
<svg style="left:769.5px;top:21.5px" width="11" height="11" viewBox="0 0 11 11"><path d="M0.8,0.8V10.2L7.5,5.5Z" fill="#6a6a6a"/><rect x="8" y="0.8" width="1.6" height="9.4" fill="#6a6a6a"/></svg>
<svg style="left:1232.5px;top:21.5px" width="11" height="11" viewBox="0 0 11 11"><circle cx="5.5" cy="5.5" r="5" fill="#9a9a9a"/><path d="M2.8,5.6L4.8,7.6L8.4,3.5" stroke="#f0f0f0" stroke-width="1.5" fill="none"/></svg>
<svg style="left:1277.6px;top:24.5px" width="7.5" height="5" viewBox="0 0 7.5 5"><path d="M0,0.3H6.5L3.25,4.2Z" fill="#c4c4c4"/></svg>
<svg style="left:1301px;top:22px" width="14" height="10" viewBox="0 0 14 10"><path d="M3,9.2A2.6,2.6 0 0 1 2.6,4.1A3.6,3.6 0 0 1 9.6,3.2A2.9,2.9 0 0 1 11,9.2Z" fill="#c8c8c8"/></svg>
<svg style="left:1383.6px;top:24.5px" width="7.5" height="5" viewBox="0 0 7.5 5"><path d="M0,0.3H6.5L3.25,4.2Z" fill="#c4c4c4"/></svg>
<svg style="left:1454.6px;top:24.5px" width="7.5" height="5" viewBox="0 0 7.5 5"><path d="M0,0.3H6.5L3.25,4.2Z" fill="#c4c4c4"/></svg>
<svg style="left:1525.5px;top:24.5px" width="7.5" height="5" viewBox="0 0 7.5 5"><path d="M0,0.3H6.5L3.25,4.2Z" fill="#c4c4c4"/></svg>
<svg style="left:0px;top:42px" width="9" height="9" viewBox="0 0 9 9"><path d="M0,1.2H1.5M3,1.2H9M0,4.5H1.5M3,4.5H9M0,7.8H1.5M3,7.8H9" stroke="#c4c4c4" stroke-width="1.1"/></svg>
<svg style="left:134.5px;top:41px" width="9" height="9" viewBox="0 0 9 9"><rect x="0.8" y="4.2" width="7.4" height="4.3" stroke="#c4c4c4" stroke-width="1.1" fill="none"/><path d="M2.2,4V2.4A2.2,2.2 0 0 1 6.6,2.4" stroke="#c4c4c4" stroke-width="1.1" fill="none"/></svg>
<svg style="left:150.5px;top:40.5px" width="3" height="10" viewBox="0 0 3 10"><circle cx="1.5" cy="1.5" r="1" fill="#c4c4c4"/><circle cx="1.5" cy="5" r="1" fill="#c4c4c4"/><circle cx="1.5" cy="8.5" r="1" fill="#c4c4c4"/></svg>
<svg style="left:0px;top:56.5px" width="11" height="11" viewBox="0 0 11 11"><path d="M0,5.5H10M5,0.5V10.5" stroke="#d0d0d0" stroke-width="1.5"/></svg>
<svg style="left:13px;top:60px" width="7.5" height="5" viewBox="0 0 7.5 5"><path d="M0,0.3H6.5L3.25,4.2Z" fill="#c4c4c4"/></svg>
<svg style="left:33px;top:58px" width="9" height="8" viewBox="0 0 9 8"><circle cx="2.6" cy="3" r="2" stroke="#b0b0b0" stroke-width="1" fill="none"/><path d="M4.2,4.5L6.4,6.6" stroke="#b0b0b0" stroke-width="1.2"/><path d="M5.8,2.2H8.6L7.2,3.8Z" fill="#b0b0b0"/></svg>
<svg style="left:169px;top:42px" width="9" height="9" viewBox="0 0 9 9"><path d="M2.8,0.3V8.7M6.2,0.3V8.7M0.3,2.8H8.7M0.3,6.2H8.7" stroke="#c4c4c4" stroke-width="1.1"/></svg>
<svg style="left:234px;top:42px" width="9" height="9" viewBox="0 0 9 9"><path d="M0.5,1.5L4,4.5L0.5,7.5M4,4.5H9" stroke="#c4c4c4" stroke-width="1.2" fill="none"/></svg>
<svg style="left:486.5px;top:40.5px" width="3" height="10" viewBox="0 0 3 10"><circle cx="1.5" cy="1.5" r="1" fill="#c4c4c4"/><circle cx="1.5" cy="5" r="1" fill="#c4c4c4"/><circle cx="1.5" cy="8.5" r="1" fill="#c4c4c4"/></svg>
<svg style="left:505.5px;top:42.5px" width="12" height="8" viewBox="0 0 12 8"><path d="M3,0.5H9A3,3 0 0 1 9,7.5H3A3,3 0 0 1 3,0.5Z" fill="#c4c4c4"/><path d="M2,4H5M3.5,2.5V5.5" stroke="#3c3c3c" stroke-width="0.9"/><circle cx="8" cy="3" r=".8" fill="#3c3c3c"/><circle cx="9.5" cy="5" r=".8" fill="#3c3c3c"/></svg>
<svg style="left:736px;top:40.5px" width="3" height="10" viewBox="0 0 3 10"><circle cx="1.5" cy="1.5" r="1" fill="#c4c4c4"/><circle cx="1.5" cy="5" r="1" fill="#c4c4c4"/><circle cx="1.5" cy="8.5" r="1" fill="#c4c4c4"/></svg>
<svg style="left:756.5px;top:41.5px" width="9" height="9" viewBox="0 0 9 9"><circle cx="4.5" cy="4.5" r="4.3" fill="#c4c4c4"/><rect x="3.8" y="3.8" width="1.4" height="3.6" fill="#3c3c3c"/><circle cx="4.5" cy="2.3" r=".8" fill="#3c3c3c"/></svg>
<svg style="left:892px;top:41px" width="9" height="11" viewBox="0 0 9 11"><circle cx="4.5" cy="4" r="3.8" fill="#c4c4c4"/><rect x="2.8" y="7" width="3.4" height="3" fill="#c4c4c4"/></svg>
<svg style="left:1510px;top:41px" width="9" height="9" viewBox="0 0 9 9"><rect x="0.8" y="4.2" width="7.4" height="4.3" stroke="#c4c4c4" stroke-width="1.1" fill="none"/><path d="M2.2,4V2.4A2.2,2.2 0 0 1 6.6,2.4" stroke="#c4c4c4" stroke-width="1.1" fill="none"/></svg>
<svg style="left:1527.5px;top:40.5px" width="3" height="10" viewBox="0 0 3 10"><circle cx="1.5" cy="1.5" r="1" fill="#c4c4c4"/><circle cx="1.5" cy="5" r="1" fill="#c4c4c4"/><circle cx="1.5" cy="8.5" r="1" fill="#c4c4c4"/></svg>
<div class="a t" style="left:167.5px;top:57.0px;line-height:12px;font-size:10px;color:#c8c8c8;">Shaded</div>
<svg style="left:251.4px;top:60px" width="7.5" height="5" viewBox="0 0 7.5 5"><path d="M0,0.3H6.5L3.25,4.2Z" fill="#c4c4c4"/></svg>
<div class="a" style="left:260.8px;top:54px;width:1.4px;height:16.7px;background:#2e2e2e;"></div>
<div class="a t" style="left:270.5px;top:57.0px;line-height:12px;font-size:9.6px;color:#c8c8c8;">2D</div>
<div class="a" style="left:286px;top:54px;width:1.4px;height:16.7px;background:#2e2e2e;"></div>
<div class="a" style="left:292.2px;top:54.5px;width:19.6px;height:15.5px;background:#505050;"></div>
<svg style="left:297px;top:56px" width="10" height="12" viewBox="0 0 10 12"><circle cx="5" cy="4.4" r="3.9" fill="#d2d2d2"/><rect x="3.2" y="7.5" width="3.6" height="3" rx=".8" fill="#d2d2d2"/></svg>
<svg style="left:316px;top:57px" width="12" height="10" viewBox="0 0 12 10"><path d="M0.5,3H3L6.5,0.5V9.5L3,7H0.5Z" fill="#c4c4c4"/><path d="M8.2,2.5Q9.6,5 8.2,7.5M9.8,1.2Q12,5 9.8,8.8" stroke="#c4c4c4" stroke-width=".9" fill="none"/></svg>
<div class="a" style="left:333.5px;top:54px;width:1px;height:16.7px;background:#2e2e2e;"></div>
<svg style="left:337px;top:56px" width="12" height="11" viewBox="0 0 12 11"><path d="M1,6L6,4L11,6L6,8Z" fill="#c4c4c4"/><path d="M1,7.6L6,9.6L11,7.6" stroke="#c4c4c4" stroke-width="1.1" fill="none"/><path d="M8,0.5V4.5M6,2.5H10" stroke="#c4c4c4" stroke-width="1.1"/></svg>
<div class="a" style="left:353.3px;top:57px;width:0.8px;height:10px;background:#2e2e2e;"></div>
<svg style="left:357.5px;top:60px" width="7.5" height="5" viewBox="0 0 7.5 5"><path d="M0,0.3H6.5L3.25,4.2Z" fill="#c4c4c4"/></svg>
<div class="a" style="left:368.2px;top:54.5px;width:25.8px;height:15.5px;background:#4a4a4a;"></div>
<svg style="left:371px;top:57px" width="12" height="10" viewBox="0 0 12 10"><path d="M0.8,5Q6,-0.5 11.2,5Q6,10.5 0.8,5Z" stroke="#9a9a9a" stroke-width="1" fill="none"/><circle cx="6" cy="5" r="1.7" fill="#9a9a9a"/><path d="M1.5,9.5L10.5,0.5" stroke="#9a9a9a" stroke-width="1"/></svg>
<div class="a t" style="left:385px;top:57.0px;line-height:12px;font-size:10px;color:#a8a8a8;">0</div>
<div class="a" style="left:395.3px;top:54.5px;width:32.7px;height:15.5px;background:#4a4a4a;"></div>
<svg style="left:398px;top:56.5px" width="12" height="12" viewBox="0 0 12 12"><path d="M2.5,0.5V11M5.5,0.5V11M0.5,3H8M0.5,6H5" stroke="#c4c4c4" stroke-width="1"/><path d="M6.5,5.5L8.5,8L10.5,5.5M8.5,8V11.5" stroke="#c4c4c4" stroke-width="1.1" fill="none"/></svg>
<div class="a" style="left:415.3px;top:57px;width:0.8px;height:10px;background:#2e2e2e;"></div>
<svg style="left:418px;top:60px" width="7.5" height="5" viewBox="0 0 7.5 5"><path d="M0,0.3H6.5L3.25,4.2Z" fill="#c4c4c4"/></svg>
<div class="a" style="left:428.5px;top:54px;width:1px;height:16.7px;background:#2e2e2e;"></div>
<svg style="left:432.5px;top:55.5px" width="14" height="14" viewBox="0 0 14 14"><path d="M3.8,4.6L12.6,13" stroke="#c4c4c4" stroke-width="1.9"/><path d="M4.6,1.2A2.6,2.6 0 1 0 5.6,5" stroke="#c4c4c4" stroke-width="1.5" fill="none"/><path d="M12.5,1.8L2.4,12" stroke="#c4c4c4" stroke-width="2.1"/><path d="M2.9,11.4L1.3,13.6L3.5,12.1Z" fill="#c4c4c4"/></svg>
<div class="a" style="left:449.5px;top:54px;width:1px;height:16.7px;background:#2e2e2e;"></div>
<svg style="left:453px;top:57.5px" width="13" height="9" viewBox="0 0 13 9"><rect x="0.5" y="1" width="7.5" height="7" fill="#c4c4c4"/><path d="M8,3.5L11.5,1V8L8,5.5Z" fill="#c4c4c4"/></svg>
<svg style="left:467.5px;top:60px" width="7.5" height="5" viewBox="0 0 7.5 5"><path d="M0,0.3H6.5L3.25,4.2Z" fill="#c4c4c4"/></svg>
<div class="a" style="left:476.6px;top:54px;width:1px;height:16.7px;background:#2e2e2e;"></div>
<div class="a t" style="left:480.5px;top:57.0px;line-height:12px;font-size:10px;color:#c8c8c8;width:17.5px;overflow:hidden;">Gizmos</div>
<svg style="left:553.5px;top:60px" width="7.5" height="5" viewBox="0 0 7.5 5"><path d="M0,0.3H6.5L3.25,4.2Z" fill="#c4c4c4"/></svg>
<div class="a" style="left:562px;top:54px;width:1px;height:16.7px;background:#2e2e2e;"></div>
<svg style="left:682.5px;top:60px" width="7.5" height="5" viewBox="0 0 7.5 5"><path d="M0,0.3H6.5L3.25,4.2Z" fill="#c4c4c4"/></svg>
<div class="a" style="left:692px;top:54px;width:1px;height:16.7px;background:#2e2e2e;"></div>
<div class="a" style="left:733px;top:61.5px;width:15px;height:1.2px;background:#5a5a5a;"></div>
<svg style="left:729px;top:58px" width="8" height="8" viewBox="0 0 8 8"><circle cx="4" cy="4" r="3.5" fill="#9a9a9a"/></svg>
</body></html>
